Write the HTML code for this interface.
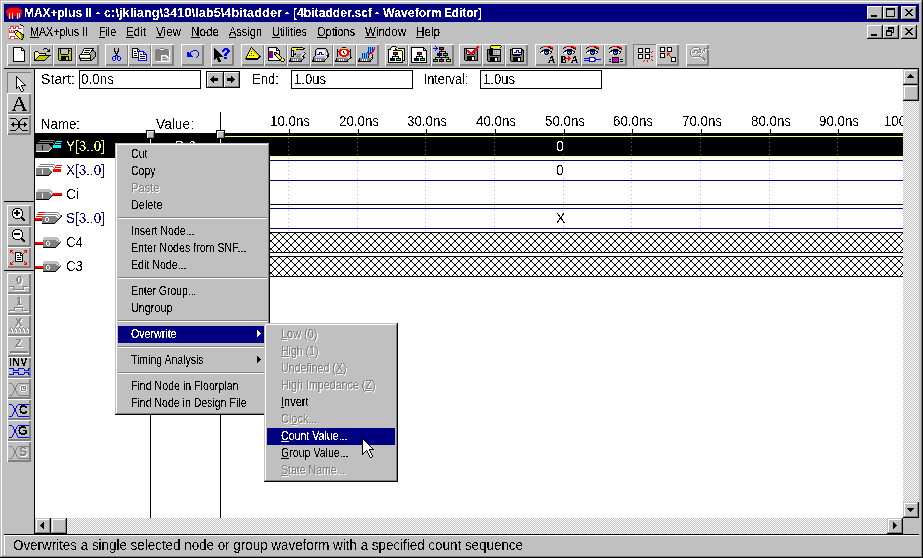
<!DOCTYPE html>
<html lang="en">
<head>
<meta charset="utf-8">
<title>MAX+plus II - Waveform Editor</title>
<style>
html,body{margin:0;padding:0;background:#c0c0c0;overflow:hidden}
#win{position:relative;width:923px;height:558px;overflow:hidden;background:#c0c0c0;font-family:"Liberation Sans",Arial,sans-serif;color:#000;cursor:default}
#win div,#win svg.ic,#win svg.wave,.t{position:absolute;box-sizing:border-box}
.t{white-space:pre;filter:url(#crisp);transform-origin:0 0}
.t13{font-size:14px;line-height:16px;filter:url(#crisp2)}
.t11{font-size:12.5px;line-height:14px}
.b{font-weight:bold}
.dis{text-shadow:1px 1px 0 #fff}
svg.ic,svg.wave{shape-rendering:crispEdges;display:block}
u{text-decoration:underline;text-underline-offset:1px;text-decoration-thickness:1px}
/* frame */
#fr-w{left:1px;top:1px;width:920px;height:1px;background:#fff}
#fr-w2{left:1px;top:1px;width:1px;height:555px;background:#fff}
#fr-d{left:1px;top:556px;width:921px;height:1px;background:#808080}
#fr-d2{left:921px;top:1px;width:1px;height:556px;background:#808080}
#fr-k{left:0;top:557px;width:923px;height:1px;background:#000}
#fr-k2{left:922px;top:0;width:1px;height:558px;background:#000}
#title{left:4px;top:4px;width:915px;height:18px;background:#000080}
#menubar{left:4px;top:22px;width:915px;height:20px}
#toolbar{left:4px;top:42px;width:915px;height:26px}
.cbtn{width:16px;height:14px;background:#c0c0c0;box-shadow:inset -1px -1px 0 #000,inset 1px 1px 0 #fff,inset -2px -2px 0 #808080}
.tbtn{top:2px;width:23px;height:22px;background:#c0c0c0;box-shadow:inset 1px 1px 0 #fff,inset -1px -2px 0 #808080}
.tbtn.last{box-shadow:inset 1px 1px 0 #fff,inset -2px -2px 0 #808080}
.tbtn.down{background:#c8c8c8;box-shadow:inset 1px 1px 0 #808080}
#line68{left:4px;top:68px;width:915px;height:1px;background:#000}
#palette{left:4px;top:69px;width:30px;height:465px}
#pal-k{left:34px;top:69px;width:1px;height:465px;background:#000}
.pbtn{left:3px;width:24px;height:21px;background:#c0c0c0;box-shadow:inset 1px 1px 0 #fff,inset -2px -2px 0 #808080}
.pbtn.down{background:#c8c8c8;box-shadow:inset 1px 1px 0 #808080}
.psep{left:0;width:30px;height:1px;background:#000}
#client{left:35px;top:69px;width:868px;height:449px;background:#fff;overflow:hidden}
.fld{height:19px;width:122px;border:1px solid #000;background:#fff;top:1px}
#nav{left:171px;top:2px;width:34px;height:17px;background:#000}
#nav div{top:1px;height:15px;background:#c0c0c0;box-shadow:inset 1px 1px 0 #fff,inset -1px -1px 0 #808080}
.sb{background:#c0c0c0;background-image:conic-gradient(#fff 25%,#c0c0c0 0 50%,#fff 0 75%,#c0c0c0 0);background-size:2px 2px}
#vsb{left:903px;top:69px;width:16px;height:449px}
#hsb{left:35px;top:518px;width:868px;height:16px}
.sbtn{width:16px;height:16px;background:#c0c0c0;box-shadow:inset -1px -1px 0 #000,inset 1px 1px 0 #c0c0c0,inset -2px -2px 0 #808080,inset 2px 2px 0 #fff}
#corner{left:903px;top:518px;width:16px;height:16px;background:#c0c0c0}
#line534{left:4px;top:534px;width:915px;height:1px;background:#000}
#status{left:4px;top:535px;width:915px;height:20px;box-shadow:inset 1px 1px 0 #fff}
.menu{background:#c0c0c0;box-shadow:inset -1px -1px 0 #000,inset 1px 1px 0 #c0c0c0,inset -2px -2px 0 #808080,inset 2px 2px 0 #fff}
#cmenu{left:115px;top:143px;width:155px;height:272px}
#submenu{left:264px;top:323px;width:134px;height:159px}
.hl{left:3px;height:17px;background:#000080}
.sep{left:3px;width:149px;height:2px;border-top:1px solid #808080;border-bottom:1px solid #fff}

</style>
</head>
<body>
<svg width="0" height="0" style="position:absolute"><defs>
<filter id="crisp" x="0" y="0" width="100%" height="100%" color-interpolation-filters="sRGB"><feComponentTransfer><feFuncA type="discrete" tableValues="0 0 0 0 0 0 0 0 0 1 1 1 1 1 1 1 1 1 1 1"/></feComponentTransfer></filter>
<filter id="crisp2" x="0" y="0" width="100%" height="100%" color-interpolation-filters="sRGB"><feComponentTransfer><feFuncA type="discrete" tableValues="0 0 0 0 0 0 0 0 0 0 1 1 1 1 1 1 1 1 1 1"/></feComponentTransfer></filter>
</defs></svg>
<div id="win">
<div id="fr-w"></div><div id="fr-w2"></div><div id="fr-d"></div><div id="fr-d2"></div><div id="fr-k"></div><div id="fr-k2"></div>

<div id="title">
<svg class="ic" width="16" height="12" viewBox="0 0 16 12" style="left:2px;top:3px"><path fill="#800000" d="M4 0h8v1h-8zM2 1h1v1h-1zM13 1h1v1h-1z"/><path fill="#f00" d="M3 1h10v1h-10zM1 2h14v1h-14zM0 3h16v1h-16zM0 4h16v1h-16zM0 5h16v1h-16zM0 6h3v1h-3zM4 6h2v1h-2zM7 6h4v1h-4zM12 6h1v1h-1zM14 6h2v1h-2zM1 7h2v1h-2zM4 7h2v1h-2zM7 7h4v1h-4zM12 7h1v1h-1zM14 7h1v1h-1zM1 8h2v1h-2zM4 8h2v1h-2zM7 8h4v1h-4zM12 8h1v1h-1zM14 8h1v1h-1zM2 9h1v1h-1zM4 9h2v1h-2zM7 9h1v1h-1zM10 9h1v1h-1zM12 9h1v1h-1zM14 9h1v1h-1zM2 10h1v1h-1zM4 10h2v1h-2zM7 10h1v1h-1zM10 10h1v1h-1zM12 10h1v1h-1zM4 11h1v1h-1zM12 11h1v1h-1z"/><path fill="#fff" d="M3 6h1v1h-1zM6 6h1v1h-1zM11 6h1v1h-1zM13 6h1v1h-1zM3 7h1v1h-1zM6 7h1v1h-1zM11 7h1v1h-1zM13 7h1v1h-1zM3 8h1v1h-1zM6 8h1v1h-1zM11 8h1v1h-1zM13 8h1v1h-1zM3 9h1v1h-1zM6 9h1v1h-1zM11 9h1v1h-1zM13 9h1v1h-1zM3 10h1v1h-1zM6 10h1v1h-1zM11 10h1v1h-1zM13 10h1v1h-1zM3 11h1v1h-1zM6 11h1v1h-1zM11 11h1v1h-1z"/></svg>
<span class="t t11 b" style="left:20px;top:2px;transform:scaleX(0.955);color:#fff;">MAX+plus II</span>
<span class="t t11 b" style="left:92px;top:2px;color:#fff;">-</span>
<span class="t t11 b" style="left:100px;top:2px;transform:scaleX(1.0248);color:#fff;">c:\jkliang\3410\lab5\4bitadder</span>
<span class="t t11 b" style="left:281px;top:2px;color:#fff;">-</span>
<span class="t t11 b" style="left:289px;top:2px;transform:scaleX(0.9719);color:#fff;">[4bitadder.scf</span>
<span class="t t11 b" style="left:371px;top:2px;color:#fff;">-</span>
<span class="t t11 b" style="left:379px;top:2px;transform:scaleX(0.9838);color:#fff;">Waveform</span>
<span class="t t11 b" style="left:440px;top:2px;transform:scaleX(0.9434);color:#fff;">Editor]</span>
<div class="cbtn" style="left:863px;top:2px"><svg class="ic" width="16" height="14" style="left:0;top:0"><path d="M4 9h6v2h-6z"/></svg></div>
<div class="cbtn" style="left:879px;top:2px"><svg class="ic" width="16" height="14" style="left:0;top:0"><path d="M3 2h9v9h-9zM4 4v6h7v-6z" fill-rule="evenodd"/></svg></div>
<div class="cbtn" style="left:897px;top:2px"><svg class="ic" width="16" height="14" style="left:0;top:0"><path d="M4 3h2v1h1v1h2v-1h1v-1h2v1h-1v1h-1v1h-1v1h1v1h1v1h1v1h-2v-1h-1v-1h-2v1h-1v1h-2v-1h1v-1h1v-1h1v-1h-1v-1h-1v-1h-1z"/></svg></div>
</div>

<div id="menubar">
<svg class="ic" width="17" height="16" viewBox="0 0 17 16" style="left:4px;top:2px"><path fill="#000" d="M12 0h1v1h-1zM13 1h2v1h-2zM15 2h1v1h-1zM7 6h3v1h-3zM6 7h1v1h-1zM9 7h2v1h-2zM6 8h1v1h-1zM8 8h1v1h-1zM11 8h2v1h-2zM7 9h1v1h-1zM13 9h1v1h-1zM7 10h1v1h-1zM14 10h2v1h-2zM8 11h1v1h-1zM15 11h1v1h-1zM9 12h1v1h-1zM15 12h1v1h-1zM10 13h1v1h-1zM15 13h1v1h-1zM11 14h1v1h-1zM14 14h1v1h-1zM13 15h2v1h-2z"/><path fill="#b0b0b0" d="M0 1h13v1h-13zM0 2h1v1h-1zM0 3h1v1h-1zM15 3h1v1h-1zM0 4h1v1h-1zM15 4h1v1h-1zM0 5h1v1h-1zM15 5h1v1h-1zM0 6h1v1h-1zM15 6h1v1h-1zM0 7h1v1h-1zM15 7h1v1h-1zM0 8h1v1h-1zM15 8h1v1h-1zM0 9h1v1h-1zM15 9h1v1h-1zM0 10h1v1h-1zM0 11h1v1h-1zM0 12h1v1h-1zM0 13h1v1h-1zM0 14h1v1h-1zM0 15h13v1h-13z"/><path fill="#fff" d="M1 2h1v1h-1zM6 2h1v1h-1zM11 2h4v1h-4zM1 3h1v1h-1zM3 3h2v1h-2zM6 3h1v1h-1zM8 3h2v1h-2zM11 3h4v1h-4zM3 4h2v1h-2zM8 4h2v1h-2zM14 4h1v1h-1zM1 5h14v1h-14zM2 6h1v1h-1zM4 6h1v1h-1zM6 6h1v1h-1zM10 6h5v1h-5zM2 7h1v1h-1zM4 7h1v1h-1zM7 7h2v1h-2zM11 7h4v1h-4zM7 8h1v1h-1zM13 8h2v1h-2zM1 9h6v1h-6zM14 9h1v1h-1zM1 10h6v1h-6zM1 11h7v1h-7zM1 12h1v1h-1zM7 12h2v1h-2zM1 13h1v1h-1zM3 13h3v1h-3zM7 13h3v1h-3zM3 14h3v1h-3zM10 14h1v1h-1z"/><path fill="#ff3030" d="M2 2h4v1h-4zM7 2h4v1h-4zM2 3h1v1h-1zM5 3h1v1h-1zM7 3h1v1h-1zM10 3h1v1h-1zM1 4h2v1h-2zM5 4h3v1h-3zM10 4h4v1h-4zM1 6h1v1h-1zM3 6h1v1h-1zM5 6h1v1h-1zM1 7h1v1h-1zM3 7h1v1h-1zM5 7h1v1h-1zM1 8h5v1h-5zM2 12h5v1h-5zM2 13h1v1h-1zM6 13h1v1h-1zM1 14h2v1h-2zM6 14h4v1h-4z"/><path fill="#ff0" d="M9 8h2v1h-2zM8 9h4v1h-4zM8 10h4v1h-4zM9 11h4v1h-4zM10 12h3v1h-3zM11 13h2v1h-2z"/><path fill="#909000" d="M12 9h1v1h-1zM12 10h2v1h-2zM13 11h2v1h-2zM13 12h2v1h-2zM13 13h2v1h-2zM12 14h2v1h-2z"/></svg>
<span class="t t11 mi" style="left:26px;top:3px;transform:scaleX(0.8561);"><u>M</u>AX+plus II</span>
<span class="t t11 mi" style="left:95px;top:3px;transform:scaleX(0.8434);"><u>F</u>ile</span>
<span class="t t11 mi" style="left:122px;top:3px;transform:scaleX(0.9282);"><u>E</u>dit</span>
<span class="t t11 mi" style="left:152px;top:3px;transform:scaleX(0.9302);"><u>V</u>iew</span>
<span class="t t11 mi" style="left:187px;top:3px;transform:scaleX(0.9367);"><u>N</u>ode</span>
<span class="t t11 mi" style="left:225px;top:3px;transform:scaleX(0.8793);"><u>A</u>ssign</span>
<span class="t t11 mi" style="left:268px;top:3px;transform:scaleX(0.8686);"><u>U</u>tilities</span>
<span class="t t11 mi" style="left:313px;top:3px;transform:scaleX(0.8818);"><u>O</u>ptions</span>
<span class="t t11 mi" style="left:361px;top:3px;transform:scaleX(0.922);"><u>W</u>indow</span>
<span class="t t11 mi" style="left:412px;top:3px;transform:scaleX(0.9332);"><u>H</u>elp</span>
<div class="cbtn" style="left:863px;top:3px"><svg class="ic" width="16" height="14" style="left:0;top:0"><path d="M4 9h6v2h-6z"/></svg></div>
<div class="cbtn" style="left:879px;top:3px"><svg class="ic" width="16" height="14" style="left:0;top:0"><path d="M5 2h6v6h-2v-1h1v-3h-4v1h-1zM3 5h6v6h-6zM4 7v3h4v-3z" fill-rule="evenodd"/></svg></div>
<div class="cbtn" style="left:897px;top:3px"><svg class="ic" width="16" height="14" style="left:0;top:0"><path d="M4 3h2v1h1v1h2v-1h1v-1h2v1h-1v1h-1v1h-1v1h1v1h1v1h1v1h-2v-1h-1v-1h-2v1h-1v1h-2v-1h1v-1h1v-1h1v-1h-1v-1h-1v-1h-1z"/></svg></div>
</div>

<div id="toolbar">
<div class="tbtn" style="left:3px"><svg class="ic" width="12" height="15" viewBox="0 0 12 15" style="left:6px;top:3px"><path fill="#000" d="M0 0h9v1h-9zM0 1h1v1h-1zM8 1h2v1h-2zM0 2h1v1h-1zM8 2h1v1h-1zM10 2h1v1h-1zM0 3h1v1h-1zM8 3h4v1h-4zM0 4h1v1h-1zM11 4h1v1h-1zM0 5h1v1h-1zM11 5h1v1h-1zM0 6h1v1h-1zM11 6h1v1h-1zM0 7h1v1h-1zM11 7h1v1h-1zM0 8h1v1h-1zM11 8h1v1h-1zM0 9h1v1h-1zM11 9h1v1h-1zM0 10h1v1h-1zM11 10h1v1h-1zM0 11h1v1h-1zM11 11h1v1h-1zM0 12h1v1h-1zM11 12h1v1h-1zM0 13h1v1h-1zM11 13h1v1h-1zM0 14h12v1h-12z"/><path fill="#fff" d="M1 1h7v1h-7zM1 2h7v1h-7zM9 2h1v1h-1zM1 3h7v1h-7zM1 4h10v1h-10zM1 5h10v1h-10zM1 6h10v1h-10zM1 7h10v1h-10zM1 8h10v1h-10zM1 9h10v1h-10zM1 10h10v1h-10zM1 11h10v1h-10zM1 12h10v1h-10zM1 13h10v1h-10z"/></svg></div>
<div class="tbtn" style="left:26px"><svg class="ic" width="17" height="13" viewBox="0 0 17 13" style="left:4px;top:4px"><path fill="#000" d="M10 0h3v1h-3zM9 1h1v1h-1zM13 1h1v1h-1zM15 1h1v1h-1zM14 2h2v1h-2zM1 3h3v1h-3zM13 3h3v1h-3zM0 4h1v1h-1zM4 4h1v1h-1zM0 5h1v1h-1zM5 5h7v1h-7zM0 6h1v1h-1zM11 6h1v1h-1zM0 7h1v1h-1zM5 7h12v1h-12zM0 8h1v1h-1zM4 8h1v1h-1zM14 8h1v1h-1zM0 9h1v1h-1zM3 9h1v1h-1zM13 9h1v1h-1zM0 10h1v1h-1zM2 10h1v1h-1zM12 10h1v1h-1zM0 11h2v1h-2zM11 11h1v1h-1zM0 12h11v1h-11z"/><path fill="#fff" d="M1 4h1v1h-1zM3 4h1v1h-1zM2 5h1v1h-1zM4 5h1v1h-1zM1 6h1v1h-1zM3 6h1v1h-1zM5 6h1v1h-1zM7 6h1v1h-1zM9 6h1v1h-1zM2 7h1v1h-1zM4 7h1v1h-1zM1 8h1v1h-1zM3 8h1v1h-1zM2 9h1v1h-1zM1 10h1v1h-1z"/><path fill="#ff0" d="M2 4h1v1h-1zM1 5h1v1h-1zM3 5h1v1h-1zM2 6h1v1h-1zM4 6h1v1h-1zM6 6h1v1h-1zM8 6h1v1h-1zM10 6h1v1h-1zM1 7h1v1h-1zM3 7h1v1h-1zM2 8h1v1h-1zM1 9h1v1h-1z"/><path fill="#c6c600" d="M5 8h9v1h-9zM4 9h9v1h-9zM3 10h9v1h-9zM2 11h9v1h-9z"/></svg></div>
<div class="tbtn" style="left:49px"><svg class="ic" width="14" height="13" viewBox="0 0 14 13" style="left:5px;top:4px"><path fill="#000" d="M0 0h14v1h-14zM0 1h1v1h-1zM2 1h1v1h-1zM10 1h1v1h-1zM13 1h1v1h-1zM0 2h1v1h-1zM2 2h1v1h-1zM10 2h2v1h-2zM13 2h1v1h-1zM0 3h1v1h-1zM2 3h1v1h-1zM10 3h1v1h-1zM13 3h1v1h-1zM0 4h1v1h-1zM2 4h1v1h-1zM10 4h1v1h-1zM13 4h1v1h-1zM0 5h1v1h-1zM2 5h1v1h-1zM10 5h1v1h-1zM13 5h1v1h-1zM0 6h1v1h-1zM3 6h7v1h-7zM13 6h1v1h-1zM0 7h1v1h-1zM13 7h1v1h-1zM0 8h1v1h-1zM3 8h8v1h-8zM13 8h1v1h-1zM0 9h1v1h-1zM3 9h5v1h-5zM10 9h1v1h-1zM13 9h1v1h-1zM0 10h1v1h-1zM3 10h5v1h-5zM10 10h1v1h-1zM13 10h1v1h-1zM0 11h1v1h-1zM3 11h5v1h-5zM10 11h1v1h-1zM13 11h1v1h-1zM1 12h13v1h-13z"/><path fill="#c6c600" d="M1 1h1v1h-1zM12 1h1v1h-1zM1 2h1v1h-1zM12 2h1v1h-1zM1 3h1v1h-1zM11 3h2v1h-2zM1 4h1v1h-1zM11 4h2v1h-2zM1 5h1v1h-1zM11 5h2v1h-2zM1 6h2v1h-2zM10 6h3v1h-3zM1 7h12v1h-12zM1 8h2v1h-2zM11 8h2v1h-2zM1 9h2v1h-2zM11 9h2v1h-2zM1 10h2v1h-2zM11 10h2v1h-2zM1 11h2v1h-2zM11 11h2v1h-2z"/><path fill="#c0c0c0" d="M3 1h7v1h-7zM3 2h7v1h-7zM3 3h7v1h-7zM3 4h7v1h-7zM3 5h7v1h-7zM8 9h2v1h-2zM8 10h2v1h-2zM8 11h2v1h-2z"/><path fill="#fff" d="M11 1h1v1h-1z"/></svg></div>
<div class="tbtn last" style="left:72px"><svg class="ic" width="17" height="13" viewBox="0 0 17 13" style="left:3px;top:4px"><path fill="#000" d="M5 0h10v1h-10zM4 1h1v1h-1zM13 1h1v1h-1zM4 2h1v1h-1zM6 2h5v1h-5zM12 2h3v1h-3zM3 3h1v1h-1zM12 3h1v1h-1zM15 3h1v1h-1zM3 4h1v1h-1zM5 4h5v1h-5zM11 4h1v1h-1zM16 4h1v1h-1zM2 5h1v1h-1zM10 5h1v1h-1zM16 5h1v1h-1zM1 6h10v1h-10zM16 6h1v1h-1zM0 7h1v1h-1zM11 7h1v1h-1zM16 7h1v1h-1zM0 8h1v1h-1zM11 8h1v1h-1zM16 8h1v1h-1zM0 9h1v1h-1zM11 9h1v1h-1zM15 9h1v1h-1zM0 10h12v1h-12zM14 10h1v1h-1zM1 11h1v1h-1zM11 11h1v1h-1zM13 11h1v1h-1zM1 12h12v1h-12z"/><path fill="#fff" d="M5 1h8v1h-8zM5 2h1v1h-1zM11 2h1v1h-1zM4 3h8v1h-8zM4 4h1v1h-1zM10 4h1v1h-1zM3 5h7v1h-7zM1 7h10v1h-10zM1 8h10v1h-10zM2 11h9v1h-9z"/><path fill="#c0c0c0" d="M13 3h1v1h-1zM12 4h1v1h-1zM14 4h1v1h-1zM11 5h1v1h-1zM13 5h1v1h-1zM15 5h1v1h-1zM12 6h1v1h-1zM14 6h1v1h-1zM13 7h1v1h-1zM15 7h1v1h-1zM12 8h1v1h-1zM14 8h1v1h-1zM1 9h5v1h-5zM9 9h2v1h-2zM13 9h1v1h-1zM12 10h1v1h-1z"/><path fill="#808080" d="M14 3h1v1h-1zM13 4h1v1h-1zM15 4h1v1h-1zM12 5h1v1h-1zM14 5h1v1h-1zM11 6h1v1h-1zM13 6h1v1h-1zM15 6h1v1h-1zM12 7h1v1h-1zM14 7h1v1h-1zM13 8h1v1h-1zM15 8h1v1h-1zM12 9h1v1h-1zM14 9h1v1h-1zM13 10h1v1h-1zM12 11h1v1h-1z"/><path fill="#ff0" d="M6 9h3v1h-3z"/></svg></div>
<div class="tbtn" style="left:101px"><svg class="ic" width="10" height="13" viewBox="0 0 10 13" style="left:7px;top:4px"><path fill="#000" d="M2 0h1v1h-1zM6 0h1v1h-1zM2 1h1v1h-1zM6 1h1v1h-1zM2 2h1v1h-1zM6 2h1v1h-1zM2 3h2v1h-2zM5 3h2v1h-2zM3 4h1v1h-1zM5 4h1v1h-1zM3 5h3v1h-3zM4 6h1v1h-1zM4 7h1v1h-1z"/><path fill="#00f" d="M3 7h1v1h-1zM5 7h1v1h-1zM1 8h3v1h-3zM5 8h3v1h-3zM0 9h1v1h-1zM3 9h1v1h-1zM5 9h1v1h-1zM8 9h1v1h-1zM0 10h1v1h-1zM3 10h1v1h-1zM5 10h1v1h-1zM8 10h1v1h-1zM0 11h1v1h-1zM3 11h1v1h-1zM5 11h1v1h-1zM8 11h1v1h-1zM1 12h2v1h-2zM6 12h2v1h-2z"/></svg></div>
<div class="tbtn" style="left:124px"><svg class="ic" width="15" height="13" viewBox="0 0 15 13" style="left:4px;top:4px"><path fill="#000" d="M0 0h6v1h-6zM0 1h1v1h-1zM5 1h2v1h-2zM0 2h1v1h-1zM5 2h1v1h-1zM7 2h1v1h-1zM0 3h1v1h-1zM2 3h2v1h-2zM5 3h1v1h-1zM0 4h1v1h-1zM0 5h1v1h-1zM2 5h3v1h-3zM0 6h1v1h-1zM8 6h2v1h-2zM0 7h1v1h-1zM2 7h3v1h-3zM0 8h1v1h-1zM8 8h5v1h-5zM0 9h6v1h-6zM8 10h5v1h-5z"/><path fill="#fff" d="M1 1h4v1h-4zM1 2h4v1h-4zM6 2h1v1h-1zM1 3h1v1h-1zM4 3h1v1h-1zM1 4h5v1h-5zM7 4h4v1h-4zM1 5h1v1h-1zM5 5h1v1h-1zM7 5h4v1h-4zM12 5h1v1h-1zM1 6h5v1h-5zM7 6h1v1h-1zM10 6h1v1h-1zM1 7h1v1h-1zM5 7h1v1h-1zM7 7h7v1h-7zM1 8h5v1h-5zM7 8h1v1h-1zM13 8h1v1h-1zM7 9h7v1h-7zM7 10h1v1h-1zM13 10h1v1h-1zM7 11h7v1h-7z"/><path fill="#00f" d="M6 3h6v1h-6zM6 4h1v1h-1zM11 4h2v1h-2zM6 5h1v1h-1zM11 5h1v1h-1zM13 5h1v1h-1zM6 6h1v1h-1zM11 6h4v1h-4zM6 7h1v1h-1zM14 7h1v1h-1zM6 8h1v1h-1zM14 8h1v1h-1zM6 9h1v1h-1zM14 9h1v1h-1zM6 10h1v1h-1zM14 10h1v1h-1zM6 11h1v1h-1zM14 11h1v1h-1zM6 12h9v1h-9z"/></svg></div>
<div class="tbtn last" style="left:147px"><svg class="ic" width="15" height="14" viewBox="0 0 15 14" style="left:4px;top:4px"><path fill="#808080" d="M5 0h4v1h-4zM1 1h4v1h-4zM9 1h4v1h-4zM0 2h14v1h-14zM0 3h14v1h-14zM0 4h14v1h-14zM0 5h14v1h-14zM0 6h14v1h-14zM0 7h6v1h-6zM12 7h2v1h-2zM0 8h6v1h-6zM13 8h1v1h-1zM0 9h6v1h-6zM8 9h2v1h-2zM0 10h6v1h-6zM0 11h6v1h-6zM8 11h4v1h-4zM1 12h5v1h-5z"/><path fill="#fff" d="M5 1h4v1h-4zM14 2h1v1h-1zM14 3h1v1h-1zM14 4h1v1h-1zM14 5h1v1h-1zM14 6h1v1h-1zM6 7h6v1h-6zM14 7h1v1h-1zM6 8h1v1h-1zM11 8h2v1h-2zM14 8h1v1h-1zM6 9h1v1h-1zM12 9h3v1h-3zM6 10h1v1h-1zM14 10h1v1h-1zM6 11h1v1h-1zM14 11h1v1h-1zM6 12h1v1h-1zM14 12h1v1h-1zM2 13h13v1h-13z"/><path fill="#c0c0c0" d="M7 8h4v1h-4zM7 9h1v1h-1zM10 9h2v1h-2zM7 10h7v1h-7zM7 11h1v1h-1zM12 11h2v1h-2zM7 12h7v1h-7z"/></svg></div>
<div class="tbtn last" style="left:177px"><svg class="ic" width="13" height="8" viewBox="0 0 13 8" style="left:6px;top:6px"><path fill="#00f" d="M6 0h4v1h-4zM4 1h2v1h-2zM10 1h1v1h-1zM0 2h2v1h-2zM3 2h1v1h-1zM11 2h1v1h-1zM0 3h4v1h-4zM11 3h1v1h-1zM0 4h4v1h-4zM11 4h1v1h-1zM0 5h5v1h-5zM11 5h1v1h-1zM0 6h6v1h-6zM10 6h1v1h-1zM9 7h1v1h-1z"/></svg></div>
<div class="tbtn last" style="left:207px"><svg class="ic" width="18" height="14" viewBox="0 0 18 14" style="left:3px;top:4px"><path fill="#000" d="M0 0h1v1h-1zM0 1h2v1h-2zM0 2h3v1h-3zM0 3h4v1h-4zM0 4h5v1h-5zM0 5h6v1h-6zM0 6h7v1h-7zM0 7h8v1h-8zM0 8h9v1h-9zM0 9h5v1h-5zM0 10h2v1h-2zM3 10h3v1h-3zM0 11h1v1h-1zM3 11h3v1h-3zM4 12h3v1h-3zM4 13h3v1h-3z"/><path fill="#00f" d="M10 0h4v1h-4zM9 1h6v1h-6zM8 2h3v1h-3zM13 2h3v1h-3zM8 3h2v1h-2zM13 3h3v1h-3zM12 4h3v1h-3zM11 5h3v1h-3zM10 6h3v1h-3zM10 7h3v1h-3zM10 9h3v1h-3zM10 10h3v1h-3z"/></svg></div>
<div class="tbtn" style="left:237px"><svg class="ic" width="17" height="13" viewBox="0 0 17 13" style="left:4px;top:3px"><path fill="#000" d="M6 0h1v1h-1zM5 1h1v1h-1zM7 1h1v1h-1zM5 2h1v1h-1zM8 2h1v1h-1zM4 3h1v1h-1zM9 3h1v1h-1zM4 4h1v1h-1zM10 4h1v1h-1zM3 5h1v1h-1zM11 5h1v1h-1zM3 6h1v1h-1zM12 6h1v1h-1zM2 7h1v1h-1zM13 7h1v1h-1zM2 8h1v1h-1zM14 8h1v1h-1zM1 9h1v1h-1zM14 9h2v1h-2zM1 10h1v1h-1zM13 10h2v1h-2zM0 11h14v1h-14zM1 12h12v1h-12z"/><path fill="#ff0" d="M6 1h1v1h-1zM6 2h1v1h-1zM5 3h2v1h-2zM5 4h1v1h-1zM7 4h2v1h-2zM4 5h5v1h-5zM4 6h2v1h-2zM7 6h3v1h-3zM3 7h8v1h-8zM3 8h1v1h-1zM5 8h1v1h-1zM7 8h1v1h-1zM9 8h3v1h-3zM2 9h11v1h-11zM2 10h11v1h-11z"/><path fill="#c6c600" d="M7 2h1v1h-1zM7 3h2v1h-2zM9 4h1v1h-1zM9 5h2v1h-2zM10 6h2v1h-2zM11 7h2v1h-2zM12 8h2v1h-2zM13 9h1v1h-1z"/><path fill="#f00" d="M6 4h1v1h-1zM6 8h1v1h-1z"/><path fill="#00f" d="M6 6h1v1h-1zM4 8h1v1h-1zM8 8h1v1h-1z"/></svg></div>
<div class="tbtn" style="left:260px"><svg class="ic" width="12" height="14" viewBox="0 0 12 14" style="left:4px;top:3px"><path fill="#000" d="M0 0h9v1h-9zM0 1h1v1h-1zM8 1h2v1h-2zM0 2h1v1h-1zM8 2h1v1h-1zM10 2h1v1h-1zM0 3h1v1h-1zM8 3h4v1h-4zM0 4h1v1h-1zM11 4h1v1h-1zM0 5h1v1h-1zM11 5h1v1h-1zM0 6h1v1h-1zM11 6h1v1h-1zM0 7h1v1h-1zM11 7h1v1h-1zM0 8h1v1h-1zM11 8h1v1h-1zM0 9h1v1h-1zM11 9h1v1h-1zM0 10h1v1h-1zM11 10h1v1h-1zM0 11h1v1h-1zM11 11h1v1h-1zM0 12h1v1h-1zM11 12h1v1h-1zM0 13h12v1h-12z"/><path fill="#fff" d="M1 1h7v1h-7zM1 2h7v1h-7zM9 2h1v1h-1zM1 3h7v1h-7zM5 4h6v1h-6zM5 5h6v1h-6zM5 6h6v1h-6zM5 7h6v1h-6zM5 8h6v1h-6zM5 9h6v1h-6zM5 10h6v1h-6zM1 11h10v1h-10zM1 12h10v1h-10z"/><path fill="#800080" d="M1 4h4v1h-4zM1 5h4v1h-4zM1 6h4v1h-4zM1 7h4v1h-4zM1 8h4v1h-4zM1 9h4v1h-4zM1 10h4v1h-4z"/></svg><svg class="ic" width="12" height="10" viewBox="0 0 12 10" style="left:10px;top:8px"><path fill="#000" d="M0 0h3v1h-3zM0 1h1v1h-1zM2 1h2v1h-2zM0 2h2v1h-2zM4 2h1v1h-1zM1 3h1v1h-1zM5 3h1v1h-1zM2 4h1v1h-1zM6 4h1v1h-1zM3 5h1v1h-1zM7 5h1v1h-1zM4 6h1v1h-1zM7 6h1v1h-1zM9 6h1v1h-1zM5 7h2v1h-2zM10 7h1v1h-1zM6 8h1v1h-1zM10 8h1v1h-1zM7 9h3v1h-3z"/><path fill="#fff" d="M1 1h1v1h-1z"/><path fill="#ff0" d="M2 2h2v1h-2zM2 3h3v1h-3zM3 4h3v1h-3zM4 5h3v1h-3zM5 6h2v1h-2zM8 6h1v1h-1zM7 7h3v1h-3zM7 8h3v1h-3z"/></svg></div>
<div class="tbtn" style="left:283px"><svg class="ic" width="17" height="15" viewBox="0 0 17 15" style="left:2px;top:3px"><path fill="#000" d="M3 0h11v1h-11zM2 1h1v1h-1zM14 1h2v1h-2zM2 2h1v1h-1zM7 2h8v1h-8zM2 3h3v1h-3zM2 4h1v1h-1zM4 4h1v1h-1zM2 5h1v1h-1zM4 5h1v1h-1zM15 5h1v1h-1zM2 6h1v1h-1zM4 6h1v1h-1zM6 6h1v1h-1zM16 6h1v1h-1zM2 7h1v1h-1zM4 7h3v1h-3zM15 7h1v1h-1zM2 8h1v1h-1zM4 8h1v1h-1zM14 8h1v1h-1zM2 9h3v1h-3zM13 9h2v1h-2zM14 10h2v1h-2zM1 11h1v1h-1zM14 11h1v1h-1zM1 12h1v1h-1zM13 12h1v1h-1zM0 13h2v1h-2zM12 13h1v1h-1zM0 14h13v1h-13z"/><path fill="#ff0" d="M3 1h11v1h-11zM3 2h4v1h-4z"/><path fill="#fff" d="M3 4h1v1h-1zM3 5h1v1h-1zM3 6h1v1h-1zM15 6h1v1h-1zM3 7h1v1h-1zM14 7h1v1h-1zM3 8h1v1h-1zM13 8h1v1h-1zM12 9h1v1h-1zM13 10h1v1h-1zM13 11h1v1h-1zM4 12h1v1h-1zM6 12h1v1h-1zM8 12h1v1h-1zM4 13h1v1h-1zM6 13h1v1h-1zM8 13h1v1h-1z"/><path fill="#c0c0c0" d="M7 5h8v1h-8zM7 6h8v1h-8zM7 7h1v1h-1zM12 7h2v1h-2zM5 8h3v1h-3zM9 8h1v1h-1zM11 8h2v1h-2zM5 9h2v1h-2zM11 9h1v1h-1zM2 10h6v1h-6zM9 10h1v1h-1zM11 10h2v1h-2z"/><path fill="#808080" d="M8 7h4v1h-4zM8 8h1v1h-1zM10 8h1v1h-1zM7 9h4v1h-4zM8 10h1v1h-1zM10 10h1v1h-1zM2 11h11v1h-11zM2 12h2v1h-2zM5 12h1v1h-1zM7 12h1v1h-1zM9 12h4v1h-4zM2 13h2v1h-2zM5 13h1v1h-1zM7 13h1v1h-1zM9 13h3v1h-3z"/></svg></div>
<div class="tbtn" style="left:306px"><svg class="ic" width="17" height="15" viewBox="0 0 17 15" style="left:2px;top:3px"><path fill="#000" d="M5 1h9v1h-9zM4 2h1v1h-1zM14 2h1v1h-1zM3 3h1v1h-1zM15 3h1v1h-1zM3 4h1v1h-1zM15 4h1v1h-1zM3 5h1v1h-1zM15 5h1v1h-1zM3 6h1v1h-1zM16 6h1v1h-1zM3 7h1v1h-1zM16 7h1v1h-1zM3 8h1v1h-1zM15 8h2v1h-2zM2 9h1v1h-1zM15 9h2v1h-2zM1 10h1v1h-1zM15 10h1v1h-1zM1 11h1v1h-1zM14 11h1v1h-1zM1 12h1v1h-1zM13 12h1v1h-1zM0 13h2v1h-2zM12 13h1v1h-1zM0 14h13v1h-13z"/><path fill="#c0c0c0" d="M5 2h9v1h-9zM4 3h1v1h-1zM13 3h1v1h-1zM4 4h1v1h-1zM13 4h1v1h-1zM4 5h1v1h-1zM13 5h1v1h-1zM4 6h1v1h-1zM13 6h1v1h-1zM4 7h1v1h-1zM13 7h1v1h-1zM4 8h1v1h-1zM13 8h1v1h-1zM3 9h11v1h-11zM2 10h12v1h-12z"/><path fill="#fff" d="M5 3h8v1h-8zM5 4h8v1h-8zM5 5h2v1h-2zM10 5h3v1h-3zM14 5h1v1h-1zM5 6h2v1h-2zM8 6h1v1h-1zM10 6h3v1h-3zM14 6h1v1h-1zM8 7h1v1h-1zM12 7h1v1h-1zM14 7h1v1h-1zM5 8h8v1h-8zM14 9h1v1h-1zM14 10h1v1h-1zM13 11h1v1h-1zM4 12h1v1h-1zM6 12h1v1h-1zM8 12h1v1h-1zM4 13h1v1h-1zM6 13h1v1h-1zM8 13h1v1h-1z"/><path fill="#808080" d="M14 3h1v1h-1zM14 4h1v1h-1zM15 6h1v1h-1zM15 7h1v1h-1zM14 8h1v1h-1zM2 11h11v1h-11zM2 12h2v1h-2zM5 12h1v1h-1zM7 12h1v1h-1zM9 12h4v1h-4zM2 13h2v1h-2zM5 13h1v1h-1zM7 13h1v1h-1zM9 13h3v1h-3z"/><path fill="#00f" d="M7 5h3v1h-3zM7 6h1v1h-1zM9 6h1v1h-1zM5 7h3v1h-3zM9 7h3v1h-3z"/></svg></div>
<div class="tbtn" style="left:329px"><svg class="ic" width="17" height="15" viewBox="0 0 17 15" style="left:2px;top:3px"><path fill="#000" d="M7 0h4v1h-4zM2 2h1v1h-1zM15 2h1v1h-1zM2 3h1v1h-1zM15 3h1v1h-1zM2 4h2v1h-2zM8 4h1v1h-1zM14 4h2v1h-2zM2 5h1v1h-1zM8 5h1v1h-1zM15 5h1v1h-1zM2 6h1v1h-1zM9 6h1v1h-1zM15 6h1v1h-1zM2 7h1v1h-1zM15 7h1v1h-1zM2 8h1v1h-1zM15 8h1v1h-1zM2 9h1v1h-1zM15 9h1v1h-1zM15 10h2v1h-2zM1 11h1v1h-1zM14 11h2v1h-2zM1 12h1v1h-1zM13 12h1v1h-1zM0 13h2v1h-2zM12 13h1v1h-1zM0 14h13v1h-13z"/><path fill="#ff0" d="M7 1h4v1h-4z"/><path fill="#f00" d="M5 2h8v1h-8zM4 3h3v1h-3zM11 3h3v1h-3zM4 4h2v1h-2zM12 4h2v1h-2zM4 5h2v1h-2zM12 5h2v1h-2zM4 6h2v1h-2zM12 6h2v1h-2zM4 7h3v1h-3zM11 7h3v1h-3zM5 8h8v1h-8zM7 9h4v1h-4z"/><path fill="#fff" d="M7 3h4v1h-4zM6 4h2v1h-2zM9 4h3v1h-3zM6 5h2v1h-2zM9 5h3v1h-3zM6 6h3v1h-3zM10 6h2v1h-2zM7 7h4v1h-4zM14 10h1v1h-1zM13 11h1v1h-1zM4 12h1v1h-1zM6 12h1v1h-1zM8 12h1v1h-1zM4 13h1v1h-1zM6 13h1v1h-1zM8 13h1v1h-1z"/><path fill="#c0c0c0" d="M4 8h1v1h-1zM13 8h1v1h-1zM3 9h4v1h-4zM11 9h4v1h-4zM2 10h12v1h-12z"/><path fill="#808080" d="M2 11h11v1h-11zM2 12h2v1h-2zM5 12h1v1h-1zM7 12h1v1h-1zM9 12h4v1h-4zM2 13h2v1h-2zM5 13h1v1h-1zM7 13h1v1h-1zM9 13h3v1h-3z"/></svg></div>
<div class="tbtn last" style="left:352px"><svg class="ic" width="17" height="15" viewBox="0 0 17 15" style="left:2px;top:3px"><path fill="#00f" d="M10 0h1v1h-1zM12 0h1v1h-1zM14 0h1v1h-1zM10 1h1v1h-1zM12 1h1v1h-1zM14 1h1v1h-1zM10 2h1v1h-1zM12 2h1v1h-1zM14 2h1v1h-1zM10 3h1v1h-1zM12 3h1v1h-1zM14 3h1v1h-1zM10 4h1v1h-1zM12 4h1v1h-1zM9 5h2v1h-2zM12 5h1v1h-1zM4 6h1v1h-1zM6 6h1v1h-1zM8 6h1v1h-1zM10 6h1v1h-1zM4 7h1v1h-1zM6 7h1v1h-1zM8 7h1v1h-1zM4 8h1v1h-1zM6 8h1v1h-1zM8 8h1v1h-1zM4 9h1v1h-1zM6 9h1v1h-1zM8 9h1v1h-1zM4 10h1v1h-1zM6 10h1v1h-1zM8 10h1v1h-1z"/><path fill="#0ff" d="M11 0h1v1h-1zM13 0h1v1h-1zM15 0h1v1h-1zM11 1h1v1h-1zM13 1h1v1h-1zM15 1h1v1h-1zM11 2h1v1h-1zM13 2h1v1h-1zM11 3h1v1h-1zM13 3h1v1h-1zM11 4h1v1h-1zM13 4h1v1h-1zM11 5h1v1h-1zM5 6h1v1h-1zM7 6h1v1h-1zM9 6h1v1h-1zM5 7h1v1h-1zM7 7h1v1h-1zM9 7h1v1h-1zM5 8h1v1h-1zM7 8h1v1h-1zM9 8h1v1h-1zM5 9h1v1h-1zM7 9h1v1h-1zM9 9h1v1h-1zM5 10h1v1h-1zM7 10h1v1h-1zM9 10h1v1h-1z"/><path fill="#f00" d="M16 0h1v1h-1zM16 1h1v1h-1zM15 2h2v1h-2zM15 3h1v1h-1zM14 4h2v1h-2zM13 5h2v1h-2zM11 6h3v1h-3zM10 7h2v1h-2zM10 8h1v1h-1z"/><path fill="#c0c0c0" d="M12 7h2v1h-2zM11 8h3v1h-3zM3 9h1v1h-1zM11 9h2v1h-2zM2 10h2v1h-2zM11 10h1v1h-1z"/><path fill="#000" d="M14 7h1v1h-1zM14 8h1v1h-1zM10 9h1v1h-1zM14 9h1v1h-1zM10 10h1v1h-1zM13 10h2v1h-2zM1 11h1v1h-1zM14 11h1v1h-1zM1 12h1v1h-1zM13 12h1v1h-1zM0 13h2v1h-2zM12 13h1v1h-1zM0 14h13v1h-13z"/><path fill="#fff" d="M13 9h1v1h-1zM12 10h1v1h-1zM13 11h1v1h-1zM4 12h1v1h-1zM6 12h1v1h-1zM8 12h1v1h-1zM4 13h1v1h-1zM6 13h1v1h-1zM8 13h1v1h-1z"/><path fill="#808080" d="M2 11h11v1h-11zM2 12h2v1h-2zM5 12h1v1h-1zM7 12h1v1h-1zM9 12h4v1h-4zM2 13h2v1h-2zM5 13h1v1h-1zM7 13h1v1h-1zM9 13h3v1h-3z"/></svg></div>
<div class="tbtn" style="left:381px"><svg class="ic" width="17" height="17" viewBox="0 0 17 17" style="left:3px;top:2px"><path fill="#000" d="M4 0h4v1h-4zM3 1h1v1h-1zM8 1h1v1h-1zM2 2h1v1h-1zM7 2h1v1h-1zM10 2h7v1h-7zM0 3h3v1h-3zM7 3h2v1h-2zM16 3h1v1h-1zM0 4h1v1h-1zM5 4h9v1h-9zM16 4h1v1h-1zM0 5h1v1h-1zM14 5h1v1h-1zM16 5h1v1h-1zM0 6h1v1h-1zM5 6h5v1h-5zM14 6h1v1h-1zM16 6h1v1h-1zM0 7h1v1h-1zM5 7h1v1h-1zM9 7h1v1h-1zM14 7h1v1h-1zM16 7h1v1h-1zM0 8h1v1h-1zM5 8h5v1h-5zM14 8h1v1h-1zM16 8h1v1h-1zM0 9h1v1h-1zM7 9h1v1h-1zM14 9h1v1h-1zM16 9h1v1h-1zM0 10h1v1h-1zM4 10h7v1h-7zM14 10h1v1h-1zM16 10h1v1h-1zM0 11h1v1h-1zM4 11h1v1h-1zM10 11h1v1h-1zM14 11h1v1h-1zM16 11h1v1h-1zM0 12h1v1h-1zM2 12h5v1h-5zM8 12h5v1h-5zM14 12h1v1h-1zM16 12h1v1h-1zM0 13h1v1h-1zM2 13h1v1h-1zM6 13h1v1h-1zM8 13h1v1h-1zM12 13h1v1h-1zM14 13h1v1h-1zM16 13h1v1h-1zM0 14h1v1h-1zM2 14h5v1h-5zM8 14h5v1h-5zM14 14h3v1h-3zM0 15h1v1h-1zM14 15h1v1h-1zM0 16h15v1h-15z"/><path fill="#fff" d="M4 1h3v1h-3zM3 2h4v1h-4zM9 2h1v1h-1zM3 3h4v1h-4zM10 3h1v1h-1zM12 3h1v1h-1zM14 3h1v1h-1zM1 4h4v1h-4zM14 4h1v1h-1zM1 5h13v1h-13zM15 5h1v1h-1zM1 6h4v1h-4zM10 6h4v1h-4zM1 7h4v1h-4zM10 7h4v1h-4zM15 7h1v1h-1zM1 8h4v1h-4zM10 8h4v1h-4zM1 9h6v1h-6zM8 9h6v1h-6zM15 9h1v1h-1zM1 10h3v1h-3zM11 10h3v1h-3zM1 11h3v1h-3zM5 11h5v1h-5zM11 11h3v1h-3zM15 11h1v1h-1zM1 12h1v1h-1zM7 12h1v1h-1zM13 12h1v1h-1zM1 13h1v1h-1zM7 13h1v1h-1zM13 13h1v1h-1zM15 13h1v1h-1zM1 14h1v1h-1zM7 14h1v1h-1zM13 14h1v1h-1zM1 15h13v1h-13z"/><path fill="#ff0" d="M7 1h1v1h-1zM8 2h1v1h-1zM9 3h1v1h-1zM11 3h1v1h-1zM13 3h1v1h-1zM15 3h1v1h-1zM15 4h1v1h-1zM15 6h1v1h-1zM15 8h1v1h-1zM15 10h1v1h-1zM15 12h1v1h-1z"/><path fill="#f00" d="M6 7h3v1h-3z"/><path fill="#00f" d="M3 13h3v1h-3z"/><path fill="#0f0" d="M9 13h3v1h-3z"/></svg></div>
<div class="tbtn" style="left:404px"><svg class="ic" width="16" height="16" viewBox="0 0 16 16" style="left:3px;top:3px"><path fill="#000" d="M0 0h13v1h-13zM0 1h1v1h-1zM12 1h2v1h-2zM0 2h1v1h-1zM12 2h1v1h-1zM14 2h1v1h-1zM0 3h1v1h-1zM12 3h4v1h-4zM0 4h1v1h-1zM15 4h1v1h-1zM0 5h1v1h-1zM6 5h5v1h-5zM15 5h1v1h-1zM0 6h1v1h-1zM6 6h1v1h-1zM10 6h1v1h-1zM15 6h1v1h-1zM0 7h1v1h-1zM6 7h5v1h-5zM15 7h1v1h-1zM0 8h1v1h-1zM8 8h1v1h-1zM15 8h1v1h-1zM0 9h1v1h-1zM5 9h7v1h-7zM15 9h1v1h-1zM0 10h1v1h-1zM5 10h1v1h-1zM11 10h1v1h-1zM15 10h1v1h-1zM0 11h1v1h-1zM3 11h5v1h-5zM9 11h5v1h-5zM15 11h1v1h-1zM0 12h1v1h-1zM3 12h1v1h-1zM7 12h1v1h-1zM9 12h1v1h-1zM13 12h1v1h-1zM15 12h1v1h-1zM0 13h1v1h-1zM3 13h5v1h-5zM9 13h5v1h-5zM15 13h1v1h-1zM0 14h1v1h-1zM15 14h1v1h-1zM0 15h16v1h-16z"/><path fill="#fff" d="M1 1h11v1h-11zM1 2h11v1h-11zM13 2h1v1h-1zM1 3h11v1h-11zM1 4h14v1h-14zM1 5h5v1h-5zM11 5h4v1h-4zM1 6h5v1h-5zM11 6h4v1h-4zM1 7h5v1h-5zM11 7h4v1h-4zM1 8h7v1h-7zM9 8h6v1h-6zM1 9h4v1h-4zM12 9h3v1h-3zM1 10h4v1h-4zM6 10h5v1h-5zM12 10h3v1h-3zM1 11h2v1h-2zM8 11h1v1h-1zM14 11h1v1h-1zM1 12h2v1h-2zM8 12h1v1h-1zM14 12h1v1h-1zM1 13h2v1h-2zM8 13h1v1h-1zM14 13h1v1h-1zM1 14h14v1h-14z"/><path fill="#f00" d="M7 6h3v1h-3z"/><path fill="#00f" d="M4 12h3v1h-3z"/><path fill="#0f0" d="M10 12h3v1h-3z"/></svg></div>
<div class="tbtn last" style="left:427px"><svg class="ic" width="18" height="16" viewBox="0 0 18 16" style="left:2px;top:2px"><path fill="#00f" d="M2 0h1v1h-1zM3 1h1v1h-1zM0 2h5v1h-5zM3 3h1v1h-1zM2 4h1v1h-1zM5 8h3v1h-3z"/><path fill="#000" d="M6 1h5v1h-5zM6 2h1v1h-1zM10 2h1v1h-1zM6 3h5v1h-5zM8 4h1v1h-1zM6 5h7v1h-7zM6 6h1v1h-1zM12 6h1v1h-1zM4 7h5v1h-5zM10 7h5v1h-5zM4 8h1v1h-1zM8 8h1v1h-1zM10 8h1v1h-1zM14 8h1v1h-1zM4 9h5v1h-5zM10 9h5v1h-5zM6 10h1v1h-1zM12 10h1v1h-1zM2 11h14v1h-14zM2 12h1v1h-1zM8 12h1v1h-1zM15 12h1v1h-1zM0 13h5v1h-5zM6 13h5v1h-5zM13 13h5v1h-5zM0 14h1v1h-1zM4 14h1v1h-1zM6 14h1v1h-1zM10 14h1v1h-1zM13 14h1v1h-1zM17 14h1v1h-1zM0 15h5v1h-5zM6 15h5v1h-5zM13 15h5v1h-5z"/><path fill="#f00" d="M7 2h3v1h-3zM7 14h3v1h-3z"/><path fill="#0f0" d="M11 8h3v1h-3zM1 14h3v1h-3z"/><path fill="#ff0" d="M14 14h3v1h-3z"/></svg></div>
<div class="tbtn" style="left:455px"><svg class="ic" width="14" height="13" viewBox="0 0 14 13" style="left:5px;top:4px"><path fill="#000" d="M0 0h13v1h-13zM0 1h1v1h-1zM2 1h1v1h-1zM10 1h1v1h-1zM12 1h2v1h-2zM0 2h1v1h-1zM2 2h1v1h-1zM10 2h1v1h-1zM13 2h1v1h-1zM0 3h1v1h-1zM2 3h1v1h-1zM10 3h1v1h-1zM13 3h1v1h-1zM0 4h1v1h-1zM2 4h1v1h-1zM10 4h1v1h-1zM13 4h1v1h-1zM0 5h1v1h-1zM2 5h1v1h-1zM10 5h1v1h-1zM13 5h1v1h-1zM0 6h1v1h-1zM3 6h7v1h-7zM13 6h1v1h-1zM0 7h1v1h-1zM13 7h1v1h-1zM0 8h1v1h-1zM3 8h8v1h-8zM13 8h1v1h-1zM0 9h1v1h-1zM3 9h5v1h-5zM10 9h1v1h-1zM13 9h1v1h-1zM0 10h1v1h-1zM3 10h5v1h-5zM10 10h1v1h-1zM13 10h1v1h-1zM0 11h1v1h-1zM3 11h5v1h-5zM10 11h1v1h-1zM13 11h1v1h-1zM1 12h13v1h-13z"/><path fill="#808080" d="M1 1h1v1h-1zM11 1h1v1h-1zM1 2h1v1h-1zM11 2h2v1h-2zM1 3h1v1h-1zM11 3h2v1h-2zM1 4h1v1h-1zM11 4h2v1h-2zM1 5h1v1h-1zM11 5h2v1h-2zM1 6h2v1h-2zM10 6h3v1h-3zM1 7h12v1h-12zM1 8h2v1h-2zM11 8h2v1h-2zM1 9h2v1h-2zM11 9h2v1h-2zM1 10h2v1h-2zM11 10h2v1h-2zM1 11h2v1h-2zM11 11h2v1h-2z"/><path fill="#fff" d="M3 1h7v1h-7zM3 2h7v1h-7zM3 3h7v1h-7zM3 4h7v1h-7zM3 5h7v1h-7zM8 9h2v1h-2zM8 10h2v1h-2zM8 11h2v1h-2z"/></svg><svg class="ic" width="12" height="9" viewBox="0 0 12 9" style="left:8px;top:2px"><path fill="#f00" d="M10 0h2v1h-2zM9 1h3v1h-3zM8 2h3v1h-3zM7 3h3v1h-3zM0 4h2v1h-2zM6 4h3v1h-3zM0 5h3v1h-3zM5 5h3v1h-3zM1 6h6v1h-6zM2 7h4v1h-4zM3 8h2v1h-2z"/></svg></div>
<div class="tbtn" style="left:478px"><svg class="ic" width="14" height="13" viewBox="0 0 14 13" style="left:5px;top:5px"><path fill="#000" d="M0 0h13v1h-13zM0 1h1v1h-1zM2 1h1v1h-1zM10 1h1v1h-1zM12 1h2v1h-2zM0 2h1v1h-1zM2 2h1v1h-1zM10 2h1v1h-1zM13 2h1v1h-1zM0 3h1v1h-1zM2 3h1v1h-1zM10 3h1v1h-1zM13 3h1v1h-1zM0 4h1v1h-1zM2 4h1v1h-1zM10 4h1v1h-1zM13 4h1v1h-1zM0 5h1v1h-1zM2 5h1v1h-1zM10 5h1v1h-1zM13 5h1v1h-1zM0 6h1v1h-1zM3 6h7v1h-7zM13 6h1v1h-1zM0 7h1v1h-1zM13 7h1v1h-1zM0 8h1v1h-1zM3 8h8v1h-8zM13 8h1v1h-1zM0 9h1v1h-1zM3 9h5v1h-5zM10 9h1v1h-1zM13 9h1v1h-1zM0 10h1v1h-1zM3 10h5v1h-5zM10 10h1v1h-1zM13 10h1v1h-1zM0 11h1v1h-1zM3 11h5v1h-5zM10 11h1v1h-1zM13 11h1v1h-1zM1 12h13v1h-13z"/><path fill="#808080" d="M1 1h1v1h-1zM11 1h1v1h-1zM1 2h1v1h-1zM11 2h2v1h-2zM1 3h1v1h-1zM11 3h2v1h-2zM1 4h1v1h-1zM11 4h2v1h-2zM1 5h1v1h-1zM11 5h2v1h-2zM1 6h2v1h-2zM10 6h3v1h-3zM1 7h12v1h-12zM1 8h2v1h-2zM11 8h2v1h-2zM1 9h2v1h-2zM11 9h2v1h-2zM1 10h2v1h-2zM11 10h2v1h-2zM1 11h2v1h-2zM11 11h2v1h-2z"/><path fill="#fff" d="M3 1h7v1h-7zM3 2h7v1h-7zM3 3h7v1h-7zM3 4h7v1h-7zM3 5h7v1h-7zM8 9h2v1h-2zM8 10h2v1h-2zM8 11h2v1h-2z"/></svg><svg class="ic" width="12" height="11" viewBox="0 0 12 11" style="left:8px;top:1px"><path fill="#000" d="M1 0h10v1h-10zM0 1h1v1h-1zM11 1h1v1h-1zM0 2h1v1h-1zM10 2h1v1h-1zM0 3h3v1h-3zM0 4h11v1h-11zM0 5h3v1h-3zM10 5h1v1h-1zM0 6h3v1h-3zM10 6h1v1h-1zM0 7h3v1h-3zM10 7h1v1h-1zM0 8h3v1h-3zM10 8h1v1h-1zM0 9h3v1h-3zM10 9h1v1h-1zM1 10h10v1h-10z"/><path fill="#ff0" d="M1 1h10v1h-10zM1 2h9v1h-9z"/><path fill="#c0c0c0" d="M3 5h7v1h-7zM3 6h1v1h-1zM5 6h1v1h-1zM7 6h3v1h-3zM3 7h7v1h-7zM3 8h1v1h-1zM5 8h1v1h-1zM7 8h3v1h-3zM3 9h7v1h-7z"/><path fill="#808080" d="M4 6h1v1h-1zM6 6h1v1h-1zM4 8h1v1h-1zM6 8h1v1h-1z"/></svg></div>
<div class="tbtn last" style="left:501px"><svg class="ic" width="14" height="13" viewBox="0 0 14 13" style="left:5px;top:5px"><path fill="#000" d="M0 0h13v1h-13zM0 1h1v1h-1zM2 1h1v1h-1zM10 1h1v1h-1zM12 1h2v1h-2zM0 2h1v1h-1zM2 2h1v1h-1zM10 2h1v1h-1zM13 2h1v1h-1zM0 3h1v1h-1zM2 3h1v1h-1zM10 3h1v1h-1zM13 3h1v1h-1zM0 4h1v1h-1zM2 4h1v1h-1zM10 4h1v1h-1zM13 4h1v1h-1zM0 5h1v1h-1zM2 5h1v1h-1zM10 5h1v1h-1zM13 5h1v1h-1zM0 6h1v1h-1zM3 6h7v1h-7zM13 6h1v1h-1zM0 7h1v1h-1zM13 7h1v1h-1zM0 8h1v1h-1zM3 8h8v1h-8zM13 8h1v1h-1zM0 9h1v1h-1zM3 9h5v1h-5zM10 9h1v1h-1zM13 9h1v1h-1zM0 10h1v1h-1zM3 10h5v1h-5zM10 10h1v1h-1zM13 10h1v1h-1zM0 11h1v1h-1zM3 11h5v1h-5zM10 11h1v1h-1zM13 11h1v1h-1zM1 12h13v1h-13z"/><path fill="#808080" d="M1 1h1v1h-1zM11 1h1v1h-1zM1 2h1v1h-1zM11 2h2v1h-2zM1 3h1v1h-1zM11 3h2v1h-2zM1 4h1v1h-1zM11 4h2v1h-2zM1 5h1v1h-1zM11 5h2v1h-2zM1 6h2v1h-2zM10 6h3v1h-3zM1 7h12v1h-12zM1 8h2v1h-2zM11 8h2v1h-2zM1 9h2v1h-2zM11 9h2v1h-2zM1 10h2v1h-2zM11 10h2v1h-2zM1 11h2v1h-2zM11 11h2v1h-2z"/><path fill="#fff" d="M3 1h7v1h-7zM3 2h7v1h-7zM3 3h7v1h-7zM3 4h7v1h-7zM3 5h7v1h-7zM8 9h2v1h-2zM8 10h2v1h-2zM8 11h2v1h-2z"/></svg><svg class="ic" width="10" height="7" viewBox="0 0 10 7" style="left:7px;top:4px"><path fill="#000" d="M0 0h10v1h-10zM0 1h1v1h-1zM9 1h1v1h-1zM0 2h1v1h-1zM9 2h1v1h-1zM0 3h1v1h-1zM9 3h1v1h-1zM0 4h1v1h-1zM9 4h1v1h-1zM0 5h1v1h-1zM9 5h1v1h-1zM0 6h10v1h-10z"/><path fill="#fff" d="M1 1h8v1h-8zM1 2h3v1h-3zM7 2h2v1h-2zM1 3h3v1h-3zM5 3h1v1h-1zM7 3h2v1h-2zM1 4h1v1h-1zM5 4h1v1h-1zM1 5h8v1h-8z"/><path fill="#00f" d="M4 2h3v1h-3zM4 3h1v1h-1zM6 3h1v1h-1zM2 4h3v1h-3zM6 4h3v1h-3z"/></svg></div>
<div class="tbtn" style="left:531px"><svg class="ic" width="16" height="9" viewBox="0 0 16 9" style="left:3px;top:2px"><path fill="#f00" d="M5 0h8v1h-8zM12 1h3v1h-3zM14 2h1v1h-1z"/><path fill="#000" d="M3 1h2v1h-2zM10 1h2v1h-2zM2 2h1v1h-1zM12 2h2v1h-2zM6 3h5v1h-5zM14 3h1v1h-1zM4 4h8v1h-8zM3 5h2v1h-2zM6 5h1v1h-1zM10 5h1v1h-1zM12 5h2v1h-2zM2 6h1v1h-1zM6 6h1v1h-1zM10 6h1v1h-1zM13 6h1v1h-1zM6 7h1v1h-1zM9 7h2v1h-2zM12 7h1v1h-1zM7 8h3v1h-3z"/><path fill="#fff" d="M5 5h1v1h-1zM11 5h1v1h-1zM3 6h3v1h-3zM7 6h1v1h-1zM11 6h2v1h-2zM3 7h3v1h-3z"/><path fill="#00f" d="M7 5h3v1h-3zM8 6h1v1h-1zM7 7h1v1h-1z"/><path fill="#0ff" d="M9 6h1v1h-1zM8 7h1v1h-1z"/></svg><span class="t" style="left:13px;top:11px;font-family:'Liberation Serif',serif;font-weight:bold;font-size:10px;line-height:10px;">A</span></div>
<div class="tbtn" style="left:554px"><svg class="ic" width="16" height="9" viewBox="0 0 16 9" style="left:3px;top:2px"><path fill="#f00" d="M5 0h8v1h-8zM12 1h3v1h-3zM14 2h1v1h-1z"/><path fill="#000" d="M3 1h2v1h-2zM10 1h2v1h-2zM2 2h1v1h-1zM12 2h2v1h-2zM6 3h5v1h-5zM14 3h1v1h-1zM4 4h8v1h-8zM3 5h2v1h-2zM6 5h1v1h-1zM10 5h1v1h-1zM12 5h2v1h-2zM2 6h1v1h-1zM6 6h1v1h-1zM10 6h1v1h-1zM13 6h1v1h-1zM6 7h1v1h-1zM9 7h2v1h-2zM12 7h1v1h-1zM7 8h3v1h-3z"/><path fill="#fff" d="M5 5h1v1h-1zM11 5h1v1h-1zM3 6h3v1h-3zM7 6h1v1h-1zM11 6h2v1h-2zM3 7h3v1h-3z"/><path fill="#00f" d="M7 5h3v1h-3zM8 6h1v1h-1zM7 7h1v1h-1z"/><path fill="#0ff" d="M9 6h1v1h-1zM8 7h1v1h-1z"/></svg><span class="t" style="left:2px;top:11px;font-family:'Liberation Serif',serif;font-weight:bold;font-size:10px;line-height:10px;">B</span><span class="t" style="left:13px;top:11px;font-family:'Liberation Serif',serif;font-weight:bold;font-size:10px;line-height:10px;">A</span><svg class="ic" width="5" height="5" viewBox="0 0 5 5" style="left:8px;top:12px"><path fill="#f00" d="M2 0h1v1h-1zM2 1h2v1h-2zM0 2h5v1h-5zM2 3h2v1h-2zM2 4h1v1h-1z"/></svg></div>
<div class="tbtn" style="left:577px"><svg class="ic" width="16" height="9" viewBox="0 0 16 9" style="left:3px;top:2px"><path fill="#f00" d="M5 0h8v1h-8zM12 1h3v1h-3zM14 2h1v1h-1z"/><path fill="#000" d="M3 1h2v1h-2zM10 1h2v1h-2zM2 2h1v1h-1zM12 2h2v1h-2zM6 3h5v1h-5zM14 3h1v1h-1zM4 4h8v1h-8zM3 5h2v1h-2zM6 5h1v1h-1zM10 5h1v1h-1zM12 5h2v1h-2zM2 6h1v1h-1zM6 6h1v1h-1zM10 6h1v1h-1zM13 6h1v1h-1zM6 7h1v1h-1zM9 7h2v1h-2zM12 7h1v1h-1zM7 8h3v1h-3z"/><path fill="#fff" d="M5 5h1v1h-1zM11 5h1v1h-1zM3 6h3v1h-3zM7 6h1v1h-1zM11 6h2v1h-2zM3 7h3v1h-3z"/><path fill="#00f" d="M7 5h3v1h-3zM8 6h1v1h-1zM7 7h1v1h-1z"/><path fill="#0ff" d="M9 6h1v1h-1zM8 7h1v1h-1z"/></svg><svg class="ic" width="17" height="5" viewBox="0 0 17 5" style="left:3px;top:13px"><path fill="#00f" d="M5 0h6v1h-6zM0 1h6v1h-6zM10 1h2v1h-2zM5 2h1v1h-1zM11 2h6v1h-6zM0 3h6v1h-6zM10 3h2v1h-2zM5 4h6v1h-6z"/><path fill="#fff" d="M6 1h4v1h-4zM6 2h5v1h-5zM6 3h4v1h-4z"/></svg></div>
<div class="tbtn last" style="left:600px"><svg class="ic" width="16" height="9" viewBox="0 0 16 9" style="left:3px;top:2px"><path fill="#f00" d="M5 0h8v1h-8zM12 1h3v1h-3zM14 2h1v1h-1z"/><path fill="#000" d="M3 1h2v1h-2zM10 1h2v1h-2zM2 2h1v1h-1zM12 2h2v1h-2zM6 3h5v1h-5zM14 3h1v1h-1zM4 4h8v1h-8zM3 5h2v1h-2zM6 5h1v1h-1zM10 5h1v1h-1zM12 5h2v1h-2zM2 6h1v1h-1zM6 6h1v1h-1zM10 6h1v1h-1zM13 6h1v1h-1zM6 7h1v1h-1zM9 7h2v1h-2zM12 7h1v1h-1zM7 8h3v1h-3z"/><path fill="#fff" d="M5 5h1v1h-1zM11 5h1v1h-1zM3 6h3v1h-3zM7 6h1v1h-1zM11 6h2v1h-2zM3 7h3v1h-3z"/><path fill="#00f" d="M7 5h3v1h-3zM8 6h1v1h-1zM7 7h1v1h-1z"/><path fill="#0ff" d="M9 6h1v1h-1zM8 7h1v1h-1z"/></svg><svg class="ic" width="14" height="6" viewBox="0 0 14 6" style="left:5px;top:13px"><path fill="#000" d="M3 0h7v1h-7zM3 1h1v1h-1zM9 1h1v1h-1zM0 2h2v1h-2zM3 2h1v1h-1zM9 2h1v1h-1zM11 2h3v1h-3zM3 3h1v1h-1zM9 3h1v1h-1zM0 4h2v1h-2zM3 4h1v1h-1zM9 4h1v1h-1zM11 4h3v1h-3zM3 5h7v1h-7z"/><path fill="#f0f" d="M4 1h1v1h-1zM6 1h1v1h-1zM8 1h1v1h-1zM5 2h1v1h-1zM7 2h1v1h-1zM4 3h1v1h-1zM6 3h1v1h-1zM8 3h1v1h-1zM5 4h1v1h-1zM7 4h1v1h-1z"/><path fill="#800080" d="M5 1h1v1h-1zM7 1h1v1h-1zM4 2h1v1h-1zM6 2h1v1h-1zM8 2h1v1h-1zM5 3h1v1h-1zM7 3h1v1h-1zM4 4h1v1h-1zM6 4h1v1h-1zM8 4h1v1h-1z"/></svg></div>
<div class="tbtn down" style="left:629px"><svg class="ic" width="16" height="14" viewBox="0 0 16 14" style="left:5px;top:4px"><path fill="#000" d="M0 0h5v1h-5zM7 0h5v1h-5zM0 1h1v1h-1zM4 1h1v1h-1zM7 1h1v1h-1zM11 1h1v1h-1zM0 2h1v1h-1zM4 2h1v1h-1zM7 2h1v1h-1zM11 2h1v1h-1zM0 3h1v1h-1zM4 3h1v1h-1zM7 3h1v1h-1zM11 3h1v1h-1zM0 4h5v1h-5zM7 4h5v1h-5zM0 6h5v1h-5zM7 6h5v1h-5zM0 7h1v1h-1zM4 7h1v1h-1zM7 7h1v1h-1zM11 7h1v1h-1zM0 8h1v1h-1zM4 8h1v1h-1zM7 8h1v1h-1zM11 8h1v1h-1zM0 9h1v1h-1zM4 9h1v1h-1zM7 9h1v1h-1zM11 9h1v1h-1zM0 10h5v1h-5zM7 10h5v1h-5z"/><path fill="#fff" d="M1 1h3v1h-3zM8 1h3v1h-3zM1 2h3v1h-3zM8 2h3v1h-3zM1 3h3v1h-3zM8 3h3v1h-3zM1 7h3v1h-3zM8 7h3v1h-3zM1 8h3v1h-3zM8 8h3v1h-3zM1 9h3v1h-3zM8 9h3v1h-3z"/><path fill="#f00" d="M14 3h1v1h-1zM13 4h1v1h-1zM13 8h2v1h-2zM13 11h1v1h-1zM6 12h1v1h-1zM9 12h1v1h-1zM14 12h1v1h-1zM5 13h1v1h-1zM9 13h1v1h-1z"/></svg></div>
<div class="tbtn last" style="left:652px"><svg class="ic" width="17" height="15" viewBox="0 0 17 15" style="left:4px;top:3px"><path fill="#000" d="M0 0h5v1h-5zM7 0h5v1h-5zM0 1h1v1h-1zM4 1h1v1h-1zM7 1h1v1h-1zM11 1h1v1h-1zM0 2h1v1h-1zM4 2h1v1h-1zM7 2h1v1h-1zM11 2h1v1h-1zM0 3h1v1h-1zM4 3h1v1h-1zM7 3h1v1h-1zM11 3h1v1h-1zM0 4h5v1h-5zM7 4h5v1h-5zM0 6h5v1h-5zM0 7h1v1h-1zM4 7h1v1h-1zM0 8h1v1h-1zM4 8h1v1h-1zM0 9h1v1h-1zM4 9h1v1h-1zM0 10h5v1h-5zM11 10h5v1h-5zM11 11h1v1h-1zM15 11h1v1h-1zM11 12h1v1h-1zM15 12h1v1h-1zM11 13h1v1h-1zM15 13h1v1h-1zM11 14h5v1h-5z"/><path fill="#fff" d="M1 1h3v1h-3zM8 1h3v1h-3zM1 2h3v1h-3zM8 2h3v1h-3zM1 3h3v1h-3zM8 3h3v1h-3zM1 7h3v1h-3zM1 8h3v1h-3zM1 9h3v1h-3zM12 11h3v1h-3zM12 12h3v1h-3zM12 13h3v1h-3z"/><path fill="#f00" d="M7 6h3v1h-3zM7 7h2v1h-2zM7 8h1v1h-1zM9 8h1v1h-1zM10 9h1v1h-1z"/></svg></div>
<div class="tbtn last" style="left:682px"><svg class="ic" width="20" height="14" viewBox="0 0 20 14" style="left:3px;top:3px"><path fill="#808080" d="M4 0h6v1h-6zM3 1h1v1h-1zM10 1h1v1h-1zM15 1h4v1h-4zM2 2h1v1h-1zM10 2h2v1h-2zM15 2h1v1h-1zM18 2h1v1h-1zM1 3h1v1h-1zM5 3h4v1h-4zM11 3h1v1h-1zM14 3h2v1h-2zM1 4h1v1h-1zM5 4h1v1h-1zM8 4h1v1h-1zM11 4h1v1h-1zM15 4h1v1h-1zM1 5h1v1h-1zM3 5h3v1h-3zM8 5h4v1h-4zM13 5h1v1h-1zM1 6h1v1h-1zM12 6h1v1h-1zM1 7h1v1h-1zM11 7h1v1h-1zM2 8h1v1h-1zM10 8h1v1h-1zM3 9h9v1h-9zM12 10h3v1h-3zM13 11h3v1h-3zM14 12h3v1h-3zM15 13h1v1h-1z"/><path fill="#fff" d="M4 1h6v1h-6zM3 2h1v1h-1zM16 2h2v1h-2zM19 2h1v1h-1zM2 3h1v1h-1zM12 3h1v1h-1zM16 3h1v1h-1zM2 4h1v1h-1zM6 4h2v1h-2zM12 4h1v1h-1zM14 4h1v1h-1zM16 4h1v1h-1zM2 5h1v1h-1zM6 5h1v1h-1zM12 5h1v1h-1zM14 5h2v1h-2zM2 6h1v1h-1zM4 6h3v1h-3zM9 6h3v1h-3zM13 6h1v1h-1zM2 7h1v1h-1zM12 7h1v1h-1zM3 8h1v1h-1zM11 8h2v1h-2zM4 10h6v1h-6zM11 10h1v1h-1zM12 11h1v1h-1zM13 12h1v1h-1zM14 13h1v1h-1zM16 13h1v1h-1z"/></svg></div>
</div>
<div id="line68"></div>

<div id="palette">
<div class="pbtn down" style="top:3px"><svg class="ic" width="10" height="16" viewBox="0 0 10 16" style="left:9px;top:4px"><path fill="#000" d="M0 0h1v1h-1zM0 1h2v1h-2zM0 2h1v1h-1zM2 2h1v1h-1zM0 3h1v1h-1zM3 3h1v1h-1zM0 4h1v1h-1zM4 4h1v1h-1zM0 5h1v1h-1zM5 5h1v1h-1zM0 6h1v1h-1zM6 6h1v1h-1zM0 7h1v1h-1zM7 7h1v1h-1zM0 8h1v1h-1zM8 8h1v1h-1zM0 9h1v1h-1zM5 9h5v1h-5zM0 10h1v1h-1zM2 10h1v1h-1zM5 10h1v1h-1zM0 11h2v1h-2zM3 11h1v1h-1zM6 11h1v1h-1zM0 12h1v1h-1zM3 12h1v1h-1zM6 12h1v1h-1zM4 13h1v1h-1zM7 13h1v1h-1zM4 14h1v1h-1zM7 14h1v1h-1zM5 15h2v1h-2z"/><path fill="#fff" d="M1 2h1v1h-1zM1 3h2v1h-2zM1 4h3v1h-3zM1 5h4v1h-4zM1 6h5v1h-5zM1 7h6v1h-6zM1 8h7v1h-7zM1 9h4v1h-4zM1 10h1v1h-1zM3 10h2v1h-2zM4 11h2v1h-2zM4 12h2v1h-2zM5 13h2v1h-2zM5 14h2v1h-2z"/></svg></div>
<div class="pbtn " style="top:24px"><span class="t" style="left:3.5px;top:1px;font-family:'Liberation Serif',serif;font-size:21px;line-height:20px;transform:scaleX(1.12);">A</span></div>
<div class="pbtn " style="top:45px"><svg class="ic" width="18" height="13" viewBox="0 0 18 13" style="left:3px;top:4px"><path fill="#000" d="M0 0h6v1h-6zM12 0h6v1h-6zM6 1h1v1h-1zM11 1h1v1h-1zM7 2h1v1h-1zM10 2h1v1h-1zM8 3h2v1h-2zM3 4h1v1h-1zM8 4h2v1h-2zM14 4h1v1h-1zM2 5h2v1h-2zM8 5h2v1h-2zM14 5h2v1h-2zM1 6h16v1h-16zM2 7h2v1h-2zM8 7h2v1h-2zM14 7h2v1h-2zM3 8h1v1h-1zM8 8h2v1h-2zM14 8h1v1h-1zM8 9h2v1h-2zM7 10h1v1h-1zM10 10h1v1h-1zM6 11h1v1h-1zM11 11h1v1h-1zM0 12h6v1h-6zM12 12h6v1h-6z"/></svg></div>
<div class="pbtn " style="top:136px"><svg class="ic" width="13" height="13" viewBox="0 0 13 13" style="left:5px;top:3px"><path fill="#000" d="M3 0h5v1h-5zM1 1h2v1h-2zM8 1h2v1h-2zM1 2h1v1h-1zM9 2h1v1h-1zM0 3h1v1h-1zM10 3h1v1h-1zM0 4h1v1h-1zM10 4h1v1h-1zM0 5h1v1h-1zM10 5h1v1h-1zM0 6h1v1h-1zM10 6h1v1h-1zM0 7h1v1h-1zM10 7h1v1h-1zM1 8h1v1h-1zM9 8h1v1h-1zM1 9h2v1h-2zM8 9h3v1h-3zM3 10h5v1h-5zM9 10h3v1h-3zM10 11h3v1h-3zM11 12h2v1h-2z"/><path fill="#fff" d="M3 1h5v1h-5zM2 2h7v1h-7zM1 3h9v1h-9zM1 4h9v1h-9zM1 5h9v1h-9zM1 6h9v1h-9zM1 7h9v1h-9zM2 8h7v1h-7zM3 9h5v1h-5z"/></svg><svg class="ic" width="6" height="6" viewBox="0 0 6 6" style="left:7px;top:5px"><path fill="#000" d="M2 0h2v1h-2zM2 1h2v1h-2zM0 2h6v1h-6zM0 3h6v1h-6zM2 4h2v1h-2zM2 5h2v1h-2z"/></svg></div>
<div class="pbtn " style="top:157px"><svg class="ic" width="13" height="13" viewBox="0 0 13 13" style="left:5px;top:3px"><path fill="#000" d="M3 0h5v1h-5zM1 1h2v1h-2zM8 1h2v1h-2zM1 2h1v1h-1zM9 2h1v1h-1zM0 3h1v1h-1zM10 3h1v1h-1zM0 4h1v1h-1zM10 4h1v1h-1zM0 5h1v1h-1zM10 5h1v1h-1zM0 6h1v1h-1zM10 6h1v1h-1zM0 7h1v1h-1zM10 7h1v1h-1zM1 8h1v1h-1zM9 8h1v1h-1zM1 9h2v1h-2zM8 9h3v1h-3zM3 10h5v1h-5zM9 10h3v1h-3zM10 11h3v1h-3zM11 12h2v1h-2z"/><path fill="#fff" d="M3 1h5v1h-5zM2 2h7v1h-7zM1 3h9v1h-9zM1 4h9v1h-9zM1 5h9v1h-9zM1 6h9v1h-9zM1 7h9v1h-9zM2 8h7v1h-7zM3 9h5v1h-5z"/></svg><svg class="ic" width="6" height="2" viewBox="0 0 6 2" style="left:7px;top:7px"><path fill="#000" d="M0 0h6v1h-6zM0 1h6v1h-6z"/></svg></div>
<div class="pbtn " style="top:178px"><svg class="ic" width="17" height="15" viewBox="0 0 17 15" style="left:3px;top:3px"><path fill="#f00" d="M0 0h3v1h-3zM14 0h3v1h-3zM0 1h2v1h-2zM15 1h2v1h-2zM0 2h1v1h-1zM2 2h1v1h-1zM14 2h1v1h-1zM16 2h1v1h-1zM3 3h1v1h-1zM13 3h1v1h-1zM3 11h1v1h-1zM14 11h1v1h-1zM0 12h1v1h-1zM2 12h1v1h-1zM14 12h1v1h-1zM16 12h1v1h-1zM0 13h2v1h-2zM15 13h2v1h-2zM0 14h3v1h-3zM14 14h3v1h-3z"/><path fill="#000" d="M5 2h6v1h-6zM5 3h1v1h-1zM10 3h2v1h-2zM5 4h1v1h-1zM10 4h1v1h-1zM12 4h1v1h-1zM5 5h1v1h-1zM7 5h2v1h-2zM10 5h3v1h-3zM5 6h1v1h-1zM12 6h1v1h-1zM5 7h1v1h-1zM7 7h4v1h-4zM12 7h1v1h-1zM5 8h1v1h-1zM12 8h1v1h-1zM5 9h1v1h-1zM7 9h4v1h-4zM12 9h1v1h-1zM5 10h1v1h-1zM12 10h1v1h-1zM5 11h8v1h-8z"/><path fill="#fff" d="M6 3h4v1h-4zM6 4h4v1h-4zM11 4h1v1h-1zM6 5h1v1h-1zM9 5h1v1h-1zM6 6h6v1h-6zM6 7h1v1h-1zM11 7h1v1h-1zM6 8h6v1h-6zM6 9h1v1h-1zM11 9h1v1h-1zM6 10h6v1h-6z"/></svg></div>
<div class="pbtn flat" style="top:204px"><span class="t" style="left:9px;top:2px;font-family:'Liberation Sans',sans-serif;font-weight:bold;font-size:11px;line-height:11px;color:#808080;text-shadow:1px 1px 0 #fff;">0</span><svg class="ic" width="20" height="5" viewBox="0 0 20 5" style="left:2px;top:13px"><path fill="#808080" d="M0 0h5v1h-5zM14 0h5v1h-5zM4 1h1v1h-1zM14 1h1v1h-1zM4 2h1v1h-1zM14 2h1v1h-1zM4 3h11v1h-11z"/><path fill="#fff" d="M1 1h3v1h-3zM15 1h5v1h-5zM15 2h1v1h-1zM5 4h11v1h-11z"/></svg></div>
<div class="pbtn flat" style="top:225px"><span class="t" style="left:9px;top:2px;font-family:'Liberation Sans',sans-serif;font-weight:bold;font-size:11px;line-height:11px;color:#808080;text-shadow:1px 1px 0 #fff;">1</span><svg class="ic" width="20" height="5" viewBox="0 0 20 5" style="left:2px;top:13px"><path fill="#808080" d="M5 0h9v1h-9zM5 1h1v1h-1zM13 1h1v1h-1zM5 2h1v1h-1zM13 2h1v1h-1zM0 3h6v1h-6zM13 3h6v1h-6z"/><path fill="#fff" d="M6 1h7v1h-7zM14 1h1v1h-1zM6 2h1v1h-1zM14 2h1v1h-1zM1 4h5v1h-5zM14 4h6v1h-6z"/></svg></div>
<div class="pbtn flat" style="top:246px"><span class="t" style="left:8px;top:2px;font-family:'Liberation Sans',sans-serif;font-weight:bold;font-size:11px;line-height:11px;color:#808080;text-shadow:1px 1px 0 #fff;">X</span><svg class="ic" width="20" height="6" viewBox="0 0 20 6" style="left:2px;top:12px"><path fill="#808080" d="M2 0h1v1h-1zM6 0h1v1h-1zM10 0h1v1h-1zM14 0h1v1h-1zM18 0h1v1h-1zM1 1h1v1h-1zM3 1h1v1h-1zM5 1h1v1h-1zM7 1h1v1h-1zM9 1h1v1h-1zM11 1h1v1h-1zM13 1h1v1h-1zM15 1h1v1h-1zM17 1h1v1h-1zM19 1h1v1h-1zM0 2h1v1h-1zM4 2h1v1h-1zM8 2h1v1h-1zM12 2h1v1h-1zM16 2h1v1h-1zM1 3h1v1h-1zM4 3h1v1h-1zM8 3h1v1h-1zM12 3h1v1h-1zM16 3h1v1h-1zM2 4h1v1h-1zM6 4h1v1h-1zM10 4h1v1h-1zM14 4h1v1h-1zM18 4h1v1h-1z"/><path fill="#fff" d="M2 1h1v1h-1zM6 1h1v1h-1zM10 1h1v1h-1zM14 1h1v1h-1zM18 1h1v1h-1zM2 2h2v1h-2zM6 2h2v1h-2zM10 2h2v1h-2zM14 2h2v1h-2zM18 2h2v1h-2zM3 3h1v1h-1zM7 3h1v1h-1zM11 3h1v1h-1zM15 3h1v1h-1zM19 3h1v1h-1zM3 4h1v1h-1zM7 4h1v1h-1zM11 4h1v1h-1zM15 4h1v1h-1zM19 4h1v1h-1zM3 5h1v1h-1zM7 5h1v1h-1zM11 5h1v1h-1zM15 5h1v1h-1zM19 5h1v1h-1z"/></svg></div>
<div class="pbtn flat" style="top:267px"><span class="t" style="left:8px;top:2px;font-family:'Liberation Sans',sans-serif;font-weight:bold;font-size:11px;line-height:11px;color:#808080;text-shadow:1px 1px 0 #fff;">Z</span><svg class="ic" width="19" height="3" viewBox="0 0 19 3" style="left:3px;top:15px"><path fill="#808080" d="M0 0h18v1h-18zM0 1h18v1h-18z"/><path fill="#fff" d="M1 2h18v1h-18z"/></svg></div>
<div class="pbtn flat" style="top:288px"><span class="t" style="left:2px;top:1px;font-family:'Liberation Sans',sans-serif;font-weight:bold;font-size:10px;line-height:10px;letter-spacing:0.7px;">INV</span><svg class="ic" width="21" height="7" viewBox="0 0 21 7" style="left:2px;top:11px"><path fill="#00f" d="M0 0h5v1h-5zM9 0h6v1h-6zM19 0h2v1h-2zM4 1h1v1h-1zM9 1h1v1h-1zM15 1h1v1h-1zM19 1h1v1h-1zM4 2h6v1h-6zM15 2h5v1h-5zM4 4h6v1h-6zM15 4h5v1h-5zM4 5h1v1h-1zM9 5h1v1h-1zM15 5h1v1h-1zM19 5h1v1h-1zM0 6h5v1h-5zM9 6h6v1h-6zM19 6h2v1h-2z"/></svg></div>
<div class="pbtn flat" style="top:309px"><svg class="ic" width="20" height="13" viewBox="0 0 20 13" style="left:2px;top:5px"><path fill="#808080" d="M0 0h3v1h-3zM9 0h11v1h-11zM3 1h1v1h-1zM8 1h1v1h-1zM4 2h1v1h-1zM7 2h1v1h-1zM4 3h1v1h-1zM7 3h1v1h-1zM5 4h2v1h-2zM5 5h2v1h-2zM5 6h2v1h-2zM5 7h2v1h-2zM4 8h1v1h-1zM7 8h1v1h-1zM4 9h1v1h-1zM7 9h1v1h-1zM3 10h1v1h-1zM8 10h1v1h-1zM3 11h1v1h-1zM8 11h1v1h-1zM0 12h3v1h-3zM9 12h11v1h-11z"/></svg><svg class="ic" width="7" height="7" viewBox="0 0 7 7" style="left:13px;top:7px"><path fill="#fff" d="M1 0h5v1h-5zM0 1h1v1h-1zM6 1h1v1h-1zM0 2h1v1h-1zM2 2h1v1h-1zM4 2h1v1h-1zM6 2h1v1h-1zM0 3h1v1h-1zM2 3h1v1h-1zM0 4h1v1h-1zM2 4h3v1h-3zM6 4h1v1h-1zM0 5h1v1h-1zM6 5h1v1h-1zM1 6h5v1h-5z"/><path fill="#808080" d="M1 1h5v1h-5zM1 2h1v1h-1zM3 2h1v1h-1zM5 2h1v1h-1zM1 3h1v1h-1zM3 3h3v1h-3zM1 4h1v1h-1zM5 4h1v1h-1zM1 5h5v1h-5z"/></svg></div>
<div class="pbtn flat" style="top:330px"><svg class="ic" width="20" height="13" viewBox="0 0 20 13" style="left:2px;top:5px"><path fill="#00f" d="M0 0h3v1h-3zM9 0h11v1h-11zM3 1h1v1h-1zM8 1h1v1h-1zM4 2h1v1h-1zM7 2h1v1h-1zM4 3h1v1h-1zM7 3h1v1h-1zM5 4h2v1h-2zM5 5h2v1h-2zM5 6h2v1h-2zM5 7h2v1h-2zM4 8h1v1h-1zM7 8h1v1h-1zM4 9h1v1h-1zM7 9h1v1h-1zM3 10h1v1h-1zM8 10h1v1h-1zM3 11h1v1h-1zM8 11h1v1h-1zM0 12h3v1h-3zM9 12h11v1h-11z"/></svg><span class="t" style="left:12px;top:5px;font-family:'Liberation Sans',sans-serif;font-weight:bold;font-size:12px;line-height:12px;">C</span></div>
<div class="pbtn flat" style="top:351px"><svg class="ic" width="20" height="13" viewBox="0 0 20 13" style="left:2px;top:5px"><path fill="#00f" d="M0 0h3v1h-3zM9 0h11v1h-11zM3 1h1v1h-1zM8 1h1v1h-1zM4 2h1v1h-1zM7 2h1v1h-1zM4 3h1v1h-1zM7 3h1v1h-1zM5 4h2v1h-2zM5 5h2v1h-2zM5 6h2v1h-2zM5 7h2v1h-2zM4 8h1v1h-1zM7 8h1v1h-1zM4 9h1v1h-1zM7 9h1v1h-1zM3 10h1v1h-1zM8 10h1v1h-1zM3 11h1v1h-1zM8 11h1v1h-1zM0 12h3v1h-3zM9 12h11v1h-11z"/></svg><span class="t" style="left:11px;top:5px;font-family:'Liberation Sans',sans-serif;font-weight:bold;font-size:12px;line-height:12px;">G</span></div>
<div class="pbtn flat" style="top:372px"><svg class="ic" width="20" height="13" viewBox="0 0 20 13" style="left:2px;top:5px"><path fill="#808080" d="M0 0h3v1h-3zM9 0h11v1h-11zM3 1h1v1h-1zM8 1h1v1h-1zM4 2h1v1h-1zM7 2h1v1h-1zM4 3h1v1h-1zM7 3h1v1h-1zM5 4h2v1h-2zM5 5h2v1h-2zM5 6h2v1h-2zM5 7h2v1h-2zM4 8h1v1h-1zM7 8h1v1h-1zM4 9h1v1h-1zM7 9h1v1h-1zM3 10h1v1h-1zM8 10h1v1h-1zM3 11h1v1h-1zM8 11h1v1h-1zM0 12h3v1h-3zM9 12h11v1h-11z"/></svg><span class="t" style="left:12px;top:5px;font-family:'Liberation Sans',sans-serif;font-weight:bold;font-size:12px;line-height:12px;color:#808080;text-shadow:1px 1px 0 #fff;">S</span></div>
<div class="psep" style="top:132px"></div>
<div class="psep" style="top:201px"></div>
</div>
<div id="pal-k"></div>

<div id="client">
<svg class="wave" width="868" height="449" viewBox="0 0 868 449" shape-rendering="crispEdges"><defs><pattern id="hx" width="8" height="8" patternUnits="userSpaceOnUse" x="4" y="4"><rect width="8" height="8" fill="#fff"/><path fill="#000" d="M0 0h1v1h-1zM7 0h1v1h-1zM1 1h1v1h-1zM6 1h1v1h-1zM2 2h1v1h-1zM5 2h1v1h-1zM3 3h2v2h-2zM2 5h1v1h-1zM5 5h1v1h-1zM1 6h1v1h-1zM6 6h1v1h-1zM0 7h1v1h-1zM7 7h1v1h-1z"/></pattern></defs><rect x="0" y="64" width="186" height="25" fill="#000"/><rect x="186" y="64" width="682" height="24" fill="#000"/><rect x="190" y="67" width="678" height="1" fill="#ffff80"/><rect x="186" y="87" width="682" height="1" fill="#ffff80"/><rect x="115" y="69" width="1" height="380" fill="#000"/><rect x="185" y="43" width="1" height="406" fill="#000"/><rect x="115" y="69" width="1" height="20" fill="#fff"/><rect x="185" y="69" width="1" height="20" fill="#fff"/><rect x="254" y="60" width="1" height="4" fill="#000"/><rect x="323" y="60" width="1" height="4" fill="#000"/><rect x="391" y="60" width="1" height="4" fill="#000"/><rect x="460" y="60" width="1" height="4" fill="#000"/><rect x="529" y="60" width="1" height="4" fill="#000"/><rect x="597" y="60" width="1" height="4" fill="#000"/><rect x="666" y="60" width="1" height="4" fill="#000"/><rect x="735" y="60" width="1" height="4" fill="#000"/><rect x="803" y="60" width="1" height="4" fill="#000"/><rect x="186" y="91" width="682" height="1" fill="#000080"/><rect x="186" y="111" width="682" height="1" fill="#000080"/><rect x="186" y="135" width="682" height="1" fill="#000"/><rect x="186" y="139" width="682" height="1" fill="#000080"/><rect x="186" y="159" width="682" height="1" fill="#000080"/><rect x="186" y="163" width="682" height="21" fill="url(#hx)"/><rect x="186" y="163" width="682" height="1" fill="#000"/><rect x="186" y="183" width="682" height="1" fill="#000"/><rect x="186" y="187" width="682" height="21" fill="url(#hx)"/><rect x="186" y="187" width="682" height="1" fill="#000"/><rect x="186" y="207" width="682" height="1" fill="#000"/><line x1="253.5" y1="65" x2="253.5" y2="87" stroke="#707070" stroke-width="1" stroke-dasharray="1 3"/><line x1="253.5" y1="89" x2="253.5" y2="163" stroke="#c0c0c0" stroke-width="1" stroke-dasharray="1 3"/><rect x="253" y="185" width="1" height="1" fill="#c0c0c0"/><line x1="322.5" y1="65" x2="322.5" y2="87" stroke="#707070" stroke-width="1" stroke-dasharray="1 3"/><line x1="322.5" y1="89" x2="322.5" y2="163" stroke="#c0c0c0" stroke-width="1" stroke-dasharray="1 3"/><rect x="322" y="185" width="1" height="1" fill="#c0c0c0"/><line x1="390.5" y1="65" x2="390.5" y2="87" stroke="#707070" stroke-width="1" stroke-dasharray="1 3"/><line x1="390.5" y1="89" x2="390.5" y2="163" stroke="#c0c0c0" stroke-width="1" stroke-dasharray="1 3"/><rect x="390" y="185" width="1" height="1" fill="#c0c0c0"/><line x1="459.5" y1="65" x2="459.5" y2="87" stroke="#707070" stroke-width="1" stroke-dasharray="1 3"/><line x1="459.5" y1="89" x2="459.5" y2="163" stroke="#c0c0c0" stroke-width="1" stroke-dasharray="1 3"/><rect x="459" y="185" width="1" height="1" fill="#c0c0c0"/><line x1="528.5" y1="65" x2="528.5" y2="87" stroke="#707070" stroke-width="1" stroke-dasharray="1 3"/><line x1="528.5" y1="89" x2="528.5" y2="163" stroke="#c0c0c0" stroke-width="1" stroke-dasharray="1 3"/><rect x="528" y="185" width="1" height="1" fill="#c0c0c0"/><line x1="596.5" y1="65" x2="596.5" y2="87" stroke="#707070" stroke-width="1" stroke-dasharray="1 3"/><line x1="596.5" y1="89" x2="596.5" y2="163" stroke="#c0c0c0" stroke-width="1" stroke-dasharray="1 3"/><rect x="596" y="185" width="1" height="1" fill="#c0c0c0"/><line x1="665.5" y1="65" x2="665.5" y2="87" stroke="#707070" stroke-width="1" stroke-dasharray="1 3"/><line x1="665.5" y1="89" x2="665.5" y2="163" stroke="#c0c0c0" stroke-width="1" stroke-dasharray="1 3"/><rect x="665" y="185" width="1" height="1" fill="#c0c0c0"/><line x1="734.5" y1="65" x2="734.5" y2="87" stroke="#707070" stroke-width="1" stroke-dasharray="1 3"/><line x1="734.5" y1="89" x2="734.5" y2="163" stroke="#c0c0c0" stroke-width="1" stroke-dasharray="1 3"/><rect x="734" y="185" width="1" height="1" fill="#c0c0c0"/><line x1="802.5" y1="65" x2="802.5" y2="87" stroke="#707070" stroke-width="1" stroke-dasharray="1 3"/><line x1="802.5" y1="89" x2="802.5" y2="163" stroke="#c0c0c0" stroke-width="1" stroke-dasharray="1 3"/><rect x="802" y="185" width="1" height="1" fill="#c0c0c0"/><rect x="520" y="71" width="12" height="13" fill="#000"/><rect x="520" y="95" width="12" height="13" fill="#fff"/><rect x="520" y="143" width="12" height="13" fill="#fff"/><rect x="111" y="61" width="9" height="9" fill="#000"/><rect x="112" y="62" width="7" height="7" fill="#fff"/><rect x="113" y="63" width="6" height="6" fill="#808080"/><rect x="113" y="63" width="5" height="5" fill="#c0c0c0"/><rect x="181" y="61" width="9" height="9" fill="#000"/><rect x="182" y="62" width="7" height="7" fill="#fff"/><rect x="183" y="63" width="6" height="6" fill="#808080"/><rect x="183" y="63" width="5" height="5" fill="#c0c0c0"/></svg>
<div class="fld" style="left:44px"></div>
<div id="nav"><div style="left:1px;width:16px"><svg class="ic" width="8" height="7" style="left:3px;top:4px"><path d="M3 0h1v1h-1zM2 1h2v1h-2zM1 2h7v1h-7zM0 3h8v1h-8zM1 4h7v1h-7zM2 5h2v1h-2zM3 6h1v1h-1z"/></svg></div><div style="left:18px;width:15px"><svg class="ic" width="8" height="7" style="left:3px;top:4px"><path d="M4 0h1v1h-1zM4 1h2v1h-2zM0 2h7v1h-7zM0 3h8v1h-8zM0 4h7v1h-7zM4 5h2v1h-2zM4 6h1v1h-1z"/></svg></div></div>
<div class="fld" style="left:256px"></div>
<div class="fld" style="left:445px"></div>
<svg class="ic" width="26" height="12" viewBox="0 0 26 12" style="left:1px;top:71px"><path fill="#808080" d="M4 0h14v1h-14zM18 1h1v1h-1zM2 2h15v1h-15zM19 2h1v1h-1zM17 3h1v1h-1zM0 4h13v1h-13zM18 4h1v1h-1zM0 5h6v1h-6zM7 5h7v1h-7zM0 6h6v1h-6zM7 6h8v1h-8zM0 7h6v1h-6zM7 7h9v1h-9zM0 8h6v1h-6zM7 8h8v1h-8zM0 9h6v1h-6zM7 9h7v1h-7zM0 10h13v1h-13z"/><path fill="#0ff" d="M20 1h6v1h-6zM19 3h6v1h-6zM17 5h8v1h-8zM17 6h8v1h-8zM17 7h8v1h-8z"/><path fill="#000" d="M6 5h1v1h-1zM6 6h1v1h-1zM6 7h1v1h-1zM6 8h1v1h-1zM6 9h1v1h-1z"/><path fill="#fff" d="M15 8h1v1h-1zM14 9h1v1h-1zM13 10h1v1h-1zM0 11h13v1h-13z"/></svg><svg class="ic" width="26" height="12" viewBox="0 0 26 12" style="left:1px;top:95px"><path fill="#808080" d="M4 0h14v1h-14zM18 1h1v1h-1zM2 2h15v1h-15zM19 2h1v1h-1zM17 3h1v1h-1zM0 4h13v1h-13zM18 4h1v1h-1zM0 5h6v1h-6zM7 5h7v1h-7zM0 6h6v1h-6zM7 6h8v1h-8zM0 7h6v1h-6zM7 7h9v1h-9zM0 8h6v1h-6zM7 8h8v1h-8zM0 9h6v1h-6zM7 9h7v1h-7zM0 10h13v1h-13z"/><path fill="#f00" d="M20 1h6v1h-6zM19 3h6v1h-6zM17 5h8v1h-8zM17 6h8v1h-8zM17 7h8v1h-8z"/><path fill="#fff" d="M6 5h1v1h-1zM6 6h1v1h-1zM6 7h1v1h-1zM6 8h1v1h-1zM6 9h1v1h-1z"/><path fill="#000" d="M15 8h1v1h-1zM14 9h1v1h-1zM13 10h1v1h-1zM0 11h13v1h-13z"/></svg><svg class="ic" width="27" height="11" viewBox="0 0 27 11" style="left:1px;top:120px"><path fill="#c0c0c0" d="M2 0h12v1h-12zM1 1h13v1h-13zM1 2h14v1h-14zM13 3h1v1h-1zM14 4h1v1h-1zM15 5h1v1h-1z"/><path fill="#808080" d="M14 1h1v1h-1zM15 2h1v1h-1zM0 3h13v1h-13zM15 3h1v1h-1zM0 4h6v1h-6zM7 4h7v1h-7zM16 4h1v1h-1zM0 5h6v1h-6zM7 5h8v1h-8zM16 5h1v1h-1zM0 6h6v1h-6zM7 6h9v1h-9zM0 7h6v1h-6zM7 7h8v1h-8zM0 8h6v1h-6zM7 8h7v1h-7zM0 9h13v1h-13z"/><path fill="#fff" d="M14 3h1v1h-1zM6 4h1v1h-1zM15 4h1v1h-1zM6 5h1v1h-1zM6 6h1v1h-1zM6 7h1v1h-1zM6 8h1v1h-1z"/><path fill="#f00" d="M17 4h9v1h-9zM17 5h9v1h-9z"/><path fill="#000" d="M16 6h1v1h-1zM15 7h1v1h-1zM14 8h1v1h-1zM13 9h1v1h-1zM0 10h13v1h-13z"/><path fill="#800000" d="M17 6h9v1h-9z"/></svg><svg class="ic" width="27" height="12" viewBox="0 0 27 12" style="left:0px;top:143px"><path fill="#f00" d="M3 0h7v1h-7zM2 2h6v1h-6zM1 4h6v1h-6zM0 6h7v1h-7zM0 7h7v1h-7z"/><path fill="#808080" d="M10 0h13v1h-13zM23 1h1v1h-1zM8 2h14v1h-14zM24 2h1v1h-1zM22 3h1v1h-1zM25 3h1v1h-1zM7 4h14v1h-14zM23 4h1v1h-1zM25 4h1v1h-1zM7 5h4v1h-4zM13 5h9v1h-9zM24 5h1v1h-1zM7 6h3v1h-3zM11 6h2v1h-2zM14 6h10v1h-10zM7 7h3v1h-3zM11 7h2v1h-2zM14 7h9v1h-9zM7 8h3v1h-3zM11 8h2v1h-2zM14 8h8v1h-8zM7 9h4v1h-4zM13 9h8v1h-8zM7 10h13v1h-13z"/><path fill="#000" d="M26 3h1v1h-1zM26 4h1v1h-1zM25 5h1v1h-1zM24 6h1v1h-1zM23 7h1v1h-1zM22 8h1v1h-1zM21 9h1v1h-1zM20 10h1v1h-1zM7 11h13v1h-13z"/><path fill="#fff" d="M11 5h2v1h-2zM10 6h1v1h-1zM13 6h1v1h-1zM10 7h1v1h-1zM13 7h1v1h-1zM10 8h1v1h-1zM13 8h1v1h-1zM11 9h2v1h-2z"/><path fill="#800000" d="M0 8h7v1h-7z"/></svg><svg class="ic" width="26" height="11" viewBox="0 0 26 11" style="left:0px;top:168px"><path fill="#c0c0c0" d="M9 0h13v1h-13zM8 1h14v1h-14zM8 2h14v1h-14zM21 3h1v1h-1zM23 4h1v1h-1z"/><path fill="#808080" d="M22 1h1v1h-1zM23 2h1v1h-1zM8 3h13v1h-13zM23 3h1v1h-1zM8 4h4v1h-4zM14 4h9v1h-9zM25 4h1v1h-1zM8 5h3v1h-3zM12 5h2v1h-2zM15 5h11v1h-11zM8 6h3v1h-3zM12 6h2v1h-2zM15 6h9v1h-9zM8 7h3v1h-3zM12 7h2v1h-2zM15 7h8v1h-8zM8 8h4v1h-4zM14 8h8v1h-8zM8 9h13v1h-13z"/><path fill="#fff" d="M22 2h1v1h-1zM22 3h1v1h-1zM12 4h2v1h-2zM24 4h1v1h-1zM11 5h1v1h-1zM14 5h1v1h-1zM11 6h1v1h-1zM14 6h1v1h-1zM11 7h1v1h-1zM14 7h1v1h-1zM12 8h2v1h-2z"/><path fill="#f00" d="M0 5h8v1h-8zM0 6h8v1h-8z"/><path fill="#000" d="M24 6h1v1h-1zM23 7h1v1h-1zM22 8h1v1h-1zM21 9h1v1h-1zM8 10h13v1h-13z"/><path fill="#800000" d="M0 7h8v1h-8z"/></svg><svg class="ic" width="26" height="11" viewBox="0 0 26 11" style="left:0px;top:192px"><path fill="#c0c0c0" d="M9 0h13v1h-13zM8 1h14v1h-14zM8 2h14v1h-14zM21 3h1v1h-1zM23 4h1v1h-1z"/><path fill="#808080" d="M22 1h1v1h-1zM23 2h1v1h-1zM8 3h13v1h-13zM23 3h1v1h-1zM8 4h4v1h-4zM14 4h9v1h-9zM25 4h1v1h-1zM8 5h3v1h-3zM12 5h2v1h-2zM15 5h11v1h-11zM8 6h3v1h-3zM12 6h2v1h-2zM15 6h9v1h-9zM8 7h3v1h-3zM12 7h2v1h-2zM15 7h8v1h-8zM8 8h4v1h-4zM14 8h8v1h-8zM8 9h13v1h-13z"/><path fill="#fff" d="M22 2h1v1h-1zM22 3h1v1h-1zM12 4h2v1h-2zM24 4h1v1h-1zM11 5h1v1h-1zM14 5h1v1h-1zM11 6h1v1h-1zM14 6h1v1h-1zM11 7h1v1h-1zM14 7h1v1h-1zM12 8h2v1h-2z"/><path fill="#f00" d="M0 5h8v1h-8zM0 6h8v1h-8z"/><path fill="#000" d="M24 6h1v1h-1zM23 7h1v1h-1zM22 8h1v1h-1zM21 9h1v1h-1zM8 10h13v1h-13z"/><path fill="#800000" d="M0 7h8v1h-8z"/></svg>
<span class="t t13" style="left:6px;top:2px;transform:scaleX(1.0159);">Start:</span>
<span class="t t13" style="left:46px;top:2px;transform:scaleX(0.9635);">0.0ns</span>
<span class="t t13" style="left:217px;top:2px;transform:scaleX(0.9371);">End:</span>
<span class="t t13" style="left:259px;top:2px;transform:scaleX(0.9343);">1.0us</span>
<span class="t t13" style="left:389px;top:2px;transform:scaleX(0.8833);">Interval:</span>
<span class="t t13" style="left:448px;top:2px;transform:scaleX(0.9343);">1.0us</span>
<span class="t t13" style="left:6px;top:47px;transform:scaleX(0.9458);">Name:</span>
<span class="t t13" style="left:121px;top:47px;transform:scaleX(0.9826);">Value:</span>
<span class="t t13 rl" style="left:235px;top:44px;transform:scaleX(0.9513);">10.0ns</span>
<span class="t t13 rl" style="left:304px;top:44px;transform:scaleX(0.9513);">20.0ns</span>
<span class="t t13 rl" style="left:372px;top:44px;transform:scaleX(0.9513);">30.0ns</span>
<span class="t t13 rl" style="left:441px;top:44px;transform:scaleX(0.9513);">40.0ns</span>
<span class="t t13 rl" style="left:510px;top:44px;transform:scaleX(0.9513);">50.0ns</span>
<span class="t t13 rl" style="left:578px;top:44px;transform:scaleX(0.9513);">60.0ns</span>
<span class="t t13 rl" style="left:647px;top:44px;transform:scaleX(0.9513);">70.0ns</span>
<span class="t t13 rl" style="left:716px;top:44px;transform:scaleX(0.9513);">80.0ns</span>
<span class="t t13 rl" style="left:784px;top:44px;transform:scaleX(0.9513);">90.0ns</span>
<span class="t t13 rl" style="left:849px;top:44px;transform:scaleX(0.9432);">100.0ns</span>
<span class="t t13" style="left:31px;top:69px;transform:scaleX(0.9637);color:#ffff80;">Y[3..0]</span>
<span class="t t13" style="left:31px;top:93px;transform:scaleX(0.9637);color:#000080;">X[3..0]</span>
<span class="t t13" style="left:31px;top:117px;transform:scaleX(0.9823);">Ci</span>
<span class="t t13" style="left:31px;top:141px;transform:scaleX(0.9637);color:#000080;">S[3..0]</span>
<span class="t t13" style="left:31px;top:165px;transform:scaleX(0.9494);">C4</span>
<span class="t t13" style="left:31px;top:189px;transform:scaleX(0.9494);">C3</span>
<span class="t t13" style="left:140px;top:69px;transform:scaleX(0.9634);color:#fff;">D 0</span>
<span class="t t13" style="left:521px;top:69px;color:#fff;">0</span>
<span class="t t13" style="left:521px;top:93px;">0</span>
<span class="t t13" style="left:521px;top:141px;">X</span>
</div>

<div id="vsb" class="sb">
<div class="sbtn" style="left:0;top:0"><svg class="ic" width="16" height="16" style="left:0;top:0"><path d="M4 9l3.5-4l3.5 4z"/></svg></div>
<div class="sbtn" style="left:0;top:16px"></div>
<div class="sbtn" style="left:0;top:433px"><svg class="ic" width="16" height="16" style="left:0;top:0"><path d="M4 6l3.5 4l3.5-4z"/></svg></div>
</div>
<div id="hsb" class="sb">
<div class="sbtn" style="left:0;top:0"><svg class="ic" width="16" height="16" style="left:0;top:0"><path d="M9 4l-4 3.5l4 3.5z"/></svg></div>
<div class="sbtn" style="left:16px;top:0"></div>
<div class="sbtn" style="left:852px;top:0"><svg class="ic" width="16" height="16" style="left:0;top:0"><path d="M6 4l4 3.5l-4 3.5z"/></svg></div>
</div>
<div id="corner"></div>
<div id="line534"></div>

<div id="status">
<span class="t t13" style="left:9px;top:2px;transform:scaleX(0.9567);">Overwrites a single selected node or group waveform with a specified count sequence</span>
</div>

<div id="cmenu" class="menu">
<div class="hl" style="top:183px;width:146px"></div>
<div class="sep" style="top:74px"></div><div class="sep" style="top:134px"></div><div class="sep" style="top:177px"></div><div class="sep" style="top:203px"></div><div class="sep" style="top:229px"></div>
<span class="t t11 cm" style="left:15.6px;top:4px;transform:scaleX(0.8482);">Cut</span>
<span class="t t11 cm" style="left:15.6px;top:21px;transform:scaleX(0.8394);">Copy</span>
<span class="t t11 dis cm" style="left:15.6px;top:38px;transform:scaleX(0.8915);color:#808080;">Paste</span>
<span class="t t11 cm" style="left:15.6px;top:55px;transform:scaleX(0.8716);">Delete</span>
<span class="t t11 cm" style="left:15.6px;top:81px;transform:scaleX(0.8461);">Insert Node...</span>
<span class="t t11 cm" style="left:15.6px;top:98px;transform:scaleX(0.8526);">Enter Nodes from SNF...</span>
<span class="t t11 cm" style="left:15.6px;top:115px;transform:scaleX(0.8496);">Edit Node...</span>
<span class="t t11 cm" style="left:15.6px;top:141px;transform:scaleX(0.8342);">Enter Group...</span>
<span class="t t11 cm" style="left:15.6px;top:158px;transform:scaleX(0.8654);">Ungroup</span>
<span class="t t11 cm" style="left:15.6px;top:184px;transform:scaleX(0.8507);color:#fff;">Overwrite</span>
<span class="t t11 cm" style="left:15.6px;top:210px;transform:scaleX(0.8394);">Timing Analysis</span>
<span class="t t11 cm" style="left:15.6px;top:236px;transform:scaleX(0.85);">Find Node in Floorplan</span>
<span class="t t11 cm" style="left:15.6px;top:253px;transform:scaleX(0.8438);">Find Node in Design File</span>
<svg class="ic" width="4" height="7" style="left:142px;top:187px"><path fill="#fff" d="M0 0h1v7h-1zM1 1h1v5h-1zM2 2h1v3h-1zM3 3h1v1h-1z"/></svg>
<svg class="ic" width="4" height="7" style="left:142px;top:213px"><path fill="#000" d="M0 0h1v7h-1zM1 1h1v5h-1zM2 2h1v3h-1zM3 3h1v1h-1z"/></svg>
</div>

<div id="submenu" class="menu">
<div class="hl" style="top:105px;width:128px"></div>
<span class="t t11 dis cm" style="left:16.6px;top:4px;transform:scaleX(0.8756);color:#808080;"><u>L</u>ow (0)</span>
<span class="t t11 dis cm" style="left:16.6px;top:21px;transform:scaleX(0.8433);color:#808080;"><u>H</u>igh (1)</span>
<span class="t t11 dis cm" style="left:16.6px;top:38px;transform:scaleX(0.8493);color:#808080;">Undefined (<u>X</u>)</span>
<span class="t t11 dis cm" style="left:16.6px;top:55px;transform:scaleX(0.8554);color:#808080;">High Impedance (<u>Z</u>)</span>
<span class="t t11 cm" style="left:16.6px;top:72px;transform:scaleX(0.8796);"><u>I</u>nvert</span>
<span class="t t11 dis cm" style="left:16.6px;top:89px;transform:scaleX(0.8756);color:#808080;">Cl<u>o</u>ck...</span>
<span class="t t11 cm" style="left:16.6px;top:106px;transform:scaleX(0.8493);color:#fff;"><u>C</u>ount Value...</span>
<span class="t t11 cm" style="left:16.6px;top:123px;transform:scaleX(0.8471);"><u>G</u>roup Value...</span>
<span class="t t11 dis cm" style="left:16.6px;top:140px;transform:scaleX(0.8438);color:#808080;"><u>S</u>tate Name...</span>
</div>

<svg class="ic" width="12" height="20" viewBox="0 0 12 20" style="left:362px;top:438px"><path fill="#000" d="M0 0h1v1h-1zM0 1h2v1h-2zM0 2h1v1h-1zM2 2h1v1h-1zM0 3h1v1h-1zM3 3h1v1h-1zM0 4h1v1h-1zM4 4h1v1h-1zM0 5h1v1h-1zM5 5h1v1h-1zM0 6h1v1h-1zM6 6h1v1h-1zM0 7h1v1h-1zM7 7h1v1h-1zM0 8h1v1h-1zM8 8h1v1h-1zM0 9h1v1h-1zM9 9h1v1h-1zM0 10h1v1h-1zM10 10h1v1h-1zM0 11h1v1h-1zM7 11h5v1h-5zM0 12h1v1h-1zM4 12h1v1h-1zM7 12h1v1h-1zM0 13h1v1h-1zM3 13h1v1h-1zM5 13h1v1h-1zM8 13h1v1h-1zM0 14h1v1h-1zM2 14h1v1h-1zM5 14h1v1h-1zM8 14h1v1h-1zM0 15h2v1h-2zM6 15h1v1h-1zM9 15h1v1h-1zM0 16h1v1h-1zM6 16h1v1h-1zM9 16h1v1h-1zM7 17h1v1h-1zM10 17h1v1h-1zM7 18h1v1h-1zM10 18h1v1h-1zM8 19h2v1h-2z"/><path fill="#fff" d="M1 2h1v1h-1zM1 3h2v1h-2zM1 4h3v1h-3zM1 5h4v1h-4zM1 6h5v1h-5zM1 7h6v1h-6zM1 8h7v1h-7zM1 9h8v1h-8zM1 10h9v1h-9zM1 11h6v1h-6zM1 12h3v1h-3zM5 12h2v1h-2zM1 13h2v1h-2zM6 13h2v1h-2zM1 14h1v1h-1zM6 14h2v1h-2zM7 15h2v1h-2zM7 16h2v1h-2zM8 17h2v1h-2zM8 18h2v1h-2z"/></svg>
</div>
</body>
</html>
